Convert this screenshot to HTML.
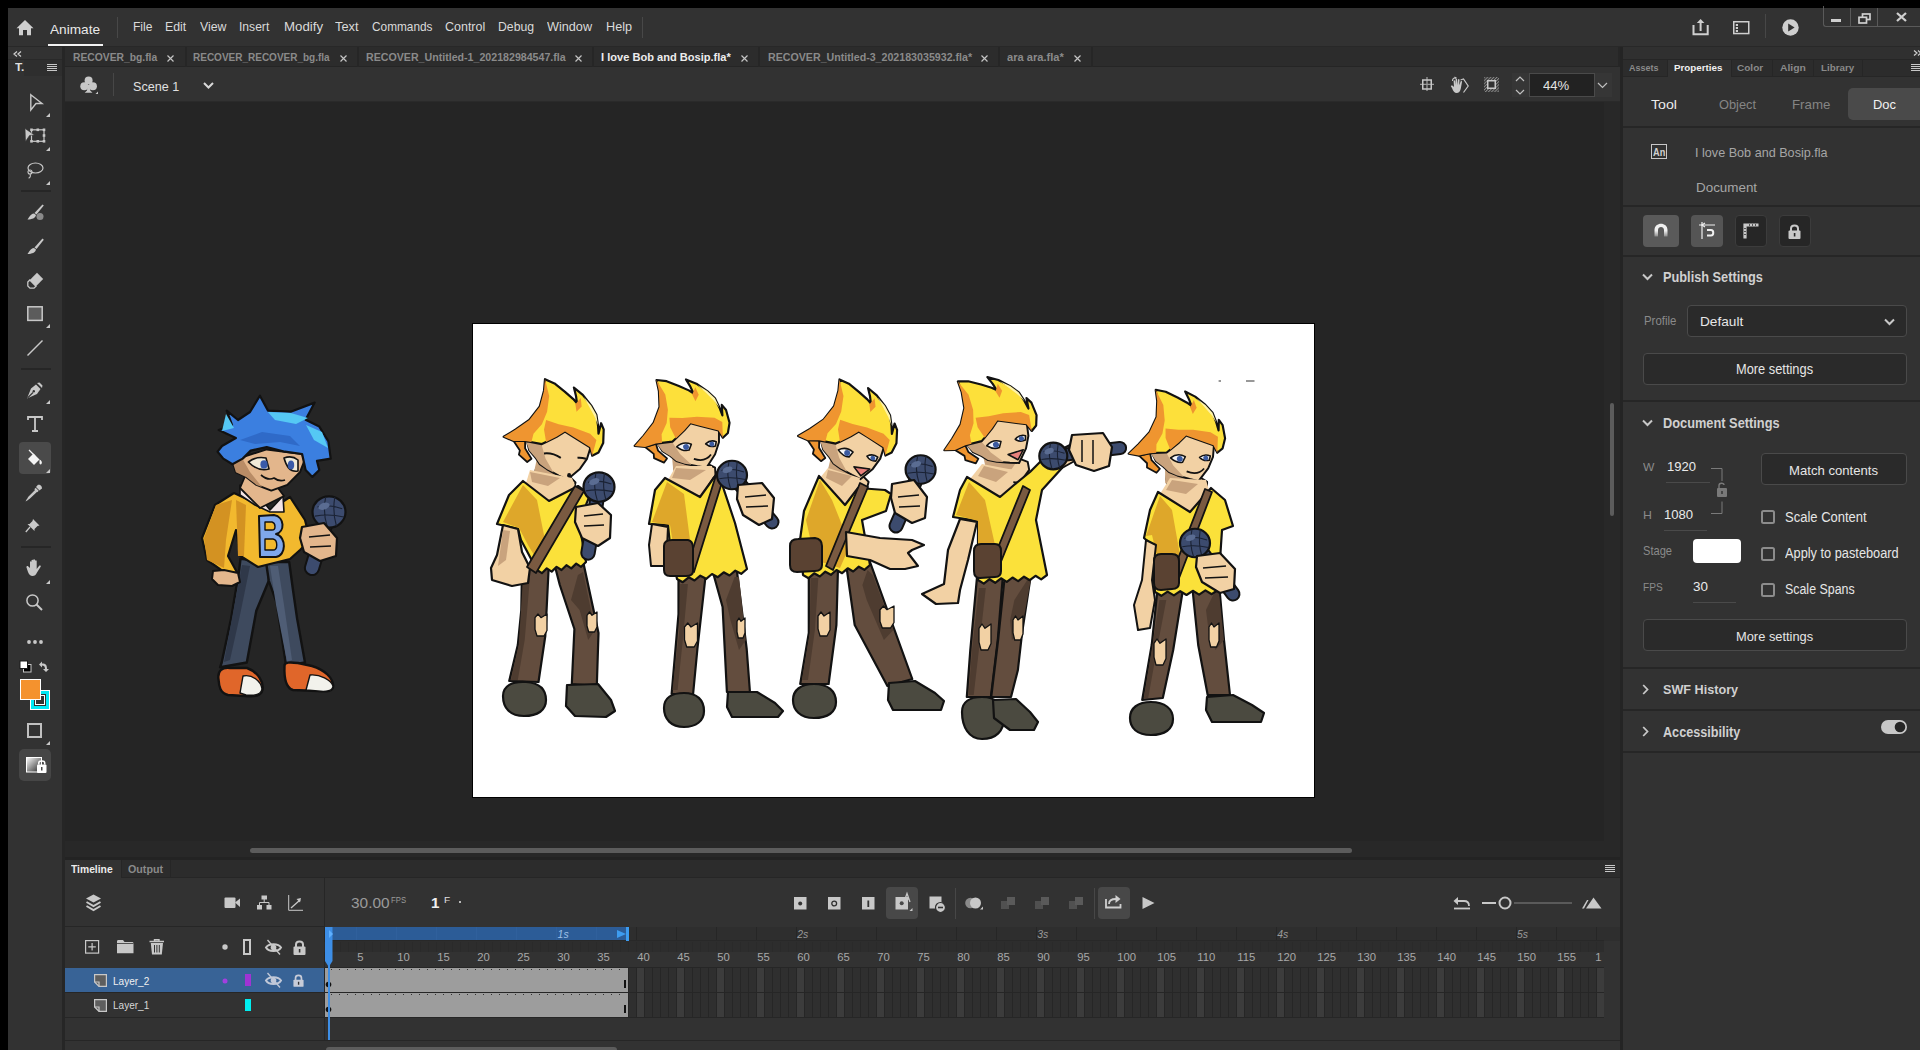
<!DOCTYPE html>
<html><head><meta charset="utf-8">
<style>
*{margin:0;padding:0;box-sizing:border-box}
html,body{width:1920px;height:1050px;overflow:hidden;background:#000;font-family:"Liberation Sans",sans-serif;position:relative}
.a{position:absolute}
.t{position:absolute;white-space:nowrap;line-height:1;transform-origin:0 0}
svg{position:absolute;overflow:visible}
</style></head><body>
<div class="a" style="left:8px;top:8px;width:1912px;height:39px;background:#323232;"></div>
<div class="a" style="left:8px;top:46px;width:1912px;height:1px;background:#282828;"></div>
<div class="a" style="left:8px;top:47px;width:54px;height:1003px;background:#323232;"></div>
<div class="a" style="left:62px;top:47px;width:3px;height:1003px;background:#262626;"></div>
<div class="a" style="left:65px;top:47px;width:1555px;height:20px;background:#2c2c2c;"></div>
<div class="a" style="left:65px;top:66px;width:1555px;height:1px;background:#252525;"></div>
<div class="a" style="left:65px;top:67px;width:1555px;height:35px;background:#323232;"></div>
<div class="a" style="left:65px;top:101px;width:1555px;height:1px;background:#2a2a2a;"></div>
<div class="a" style="left:65px;top:102px;width:1555px;height:755px;background:#282828;"></div>
<div class="a" style="left:65px;top:102px;width:1539px;height:739px;background:#252525;"></div>
<div class="a" style="left:65px;top:857px;width:1555px;height:3px;background:#232323;"></div>
<div class="a" style="left:65px;top:860px;width:1555px;height:190px;background:#323232;"></div>
<div class="a" style="left:1620px;top:47px;width:3px;height:1003px;background:#242424;"></div>
<div class="a" style="left:1623px;top:47px;width:297px;height:1003px;background:#323232;"></div>
<svg style="left:16px;top:19px" width="18" height="17" viewBox="0 0 18 17"><path d="M9 1 L17.5 9.3 L15 9.3 L15 16.3 L11 16.3 L11 11 L7 11 L7 16.3 L3 16.3 L3 9.3 L0.5 9.3 Z" fill="#cfcfcf"/></svg>
<div class="a" style="left:48px;top:44px;width:55px;height:2px;background:#f2f2f2;"></div>
<div class="a" style="left:117px;top:17px;width:1px;height:21px;background:#484848;"></div>
<div class="a" style="left:642px;top:17px;width:1px;height:21px;background:#484848;"></div>
<svg style="left:1692px;top:18px" width="18" height="18" viewBox="0 0 18 18"><path d="M1.5 7 V16.3 H15.7 V7" fill="none" stroke="#cfcfcf" stroke-width="2"/><path d="M8.6 13 V3.5" stroke="#cfcfcf" stroke-width="2"/><path d="M4.8 5 L8.6 1 L12.4 5 Z" fill="#cfcfcf"/></svg>
<svg style="left:1733px;top:21px" width="17" height="14" viewBox="0 0 17 14"><rect x="0.75" y="0.75" width="15" height="11.8" fill="none" stroke="#cfcfcf" stroke-width="1.5"/><rect x="2.8" y="3" width="2.2" height="2" fill="#cfcfcf"/><rect x="2.8" y="6" width="2.2" height="2" fill="#cfcfcf"/><rect x="2.8" y="9" width="2.2" height="2" fill="#cfcfcf"/></svg>
<div class="a" style="left:1765px;top:14px;width:1px;height:24px;background:#474747;"></div>
<svg style="left:1782px;top:19px" width="17" height="17" viewBox="0 0 17 17"><circle cx="8.5" cy="8.5" r="8.2" fill="#cfcfcf"/><path d="M6.2 4.6 L12.6 8.5 L6.2 12.4 Z" fill="#323232"/></svg>
<div class="a" style="left:1823px;top:6px;width:100px;height:21px;border:1px solid #5a5a5a;border-top:none;border-right:none;border-radius:0 0 0 3px"></div>
<div class="a" style="left:1850px;top:8px;width:1px;height:18px;background:#5a5a5a;"></div>
<div class="a" style="left:1877px;top:8px;width:1px;height:18px;background:#5a5a5a;"></div>
<div class="a" style="left:1831px;top:19px;width:10px;height:3px;background:#cfcfcf;"></div>
<svg style="left:1858px;top:13px" width="13" height="11" viewBox="0 0 13 11"><rect x="4.5" y="1" width="7.5" height="5.5" fill="none" stroke="#cfcfcf" stroke-width="1.7"/><rect x="1" y="4.3" width="7.5" height="5.7" fill="#323232" stroke="#cfcfcf" stroke-width="1.7"/></svg>
<svg style="left:1896px;top:12px" width="11" height="10" viewBox="0 0 11 10"><path d="M1 1 L10 9 M10 1 L1 9" stroke="#cfcfcf" stroke-width="2.3"/></svg>
<svg style="left:166.5px;top:54.5px" width="7" height="7" viewBox="0 0 7 7"><path d="M0.5 0.5 L6.5 6.5 M6.5 0.5 L0.5 6.5" stroke="#c4c4c4" stroke-width="1.2"/></svg>
<div class="a" style="left:185px;top:47px;width:2px;height:20px;background:#262626;"></div>
<svg style="left:339.5px;top:54.5px" width="7" height="7" viewBox="0 0 7 7"><path d="M0.5 0.5 L6.5 6.5 M6.5 0.5 L0.5 6.5" stroke="#c4c4c4" stroke-width="1.2"/></svg>
<div class="a" style="left:357px;top:47px;width:2px;height:20px;background:#262626;"></div>
<svg style="left:574.5px;top:54.5px" width="7" height="7" viewBox="0 0 7 7"><path d="M0.5 0.5 L6.5 6.5 M6.5 0.5 L0.5 6.5" stroke="#c4c4c4" stroke-width="1.2"/></svg>
<div class="a" style="left:592px;top:47px;width:2px;height:20px;background:#262626;"></div>
<svg style="left:740.5px;top:54.5px" width="7" height="7" viewBox="0 0 7 7"><path d="M0.5 0.5 L6.5 6.5 M6.5 0.5 L0.5 6.5" stroke="#c4c4c4" stroke-width="1.2"/></svg>
<div class="a" style="left:758px;top:47px;width:2px;height:20px;background:#262626;"></div>
<svg style="left:980.5px;top:54.5px" width="7" height="7" viewBox="0 0 7 7"><path d="M0.5 0.5 L6.5 6.5 M6.5 0.5 L0.5 6.5" stroke="#c4c4c4" stroke-width="1.2"/></svg>
<div class="a" style="left:998px;top:47px;width:2px;height:20px;background:#262626;"></div>
<svg style="left:1073.5px;top:54.5px" width="7" height="7" viewBox="0 0 7 7"><path d="M0.5 0.5 L6.5 6.5 M6.5 0.5 L0.5 6.5" stroke="#c4c4c4" stroke-width="1.2"/></svg>
<div class="a" style="left:1091px;top:47px;width:2px;height:20px;background:#262626;"></div>
<div class="a" style="left:1618px;top:47px;width:2px;height:20px;background:#262626;"></div>
<svg style="left:80px;top:76px" width="19" height="19" viewBox="0 0 19 19"><circle cx="8.6" cy="4.4" r="4" fill="#c8c8c8"/><circle cx="4.3" cy="10.2" r="4" fill="#c8c8c8"/><circle cx="12.9" cy="10.2" r="4" fill="#c8c8c8"/><path d="M7.6 9 L9.6 9 L10.2 14.5 L12.5 16.8 L4.7 16.8 L7 14.5 Z" fill="#c8c8c8"/><path d="M18 15.5 L18 18 L15.5 18 Z" fill="#c8c8c8"/></svg>
<div class="a" style="left:113px;top:73px;width:1px;height:23px;background:#474747;"></div>
<svg style="left:203px;top:82px" width="11" height="7" viewBox="0 0 11 7"><path d="M1 1 L5.5 5.5 L10 1" fill="none" stroke="#d8d8d8" stroke-width="2"/></svg>
<svg style="left:1419px;top:76px" width="16" height="16" viewBox="0 0 16 16"><g fill="none"><path d="M8 1 V15 M1 8.3 H15" stroke="#9a9a9a" stroke-width="1.3"/><rect x="3.75" y="4" width="8.5" height="9" stroke="#c8c8c8" stroke-width="1.5"/></g></svg>
<svg style="left:1450px;top:76px" width="20" height="18" viewBox="0 0 20 18"><path d="M2 12 L1 10.5 C0.6 9.8 1.6 9 2.4 9.6 L4 11 L3.6 5 C3.6 4 5 4 5.1 5 L5.5 9 L5.6 3.3 C5.6 2.3 7.1 2.3 7.1 3.3 L7.3 9 L8 3.8 C8.1 2.8 9.6 2.9 9.5 3.9 L9.2 9.3 L10.6 5.5 C10.9 4.6 12.2 5 12 5.9 L10.8 12.5 C10.3 15.6 8.6 17 6.6 17 C4.6 17 3.2 15.5 2 12 Z" fill="#c8c8c8"/><path d="M10.5 4 L13.5 3 L18.2 10 L13.5 16.5" fill="none" stroke="#c8c8c8" stroke-width="1.2"/><path d="M2.5 5 C2.5 3 3.5 2 5 1.8" fill="none" stroke="#c8c8c8" stroke-width="1.1"/><path d="M4.5 0.5 L7 1.8 L4.8 3.3 Z" fill="#c8c8c8"/></svg>
<svg style="left:1484px;top:77px" width="16" height="16" viewBox="0 0 16 16"><defs><pattern id="hp" width="2.2" height="2.2" patternUnits="userSpaceOnUse" patternTransform="rotate(45)"><rect width="1" height="2.2" fill="#8a8a8a"/></pattern></defs><path d="M0 0 H15 V15 H0 Z M3 3 V12 H12 V3 Z" fill="url(#hp)" fill-rule="evenodd"/><rect x="3.75" y="3.75" width="7.5" height="7.5" fill="none" stroke="#c8c8c8" stroke-width="1.5"/></svg>
<div class="a" style="left:1512px;top:73px;width:17px;height:24px;background:#363636;"></div>
<svg style="left:1515px;top:76px" width="10" height="19" viewBox="0 0 10 19"><path d="M1 5 L5 1 L9 5 M1 14 L5 18 L9 14" fill="none" stroke="#c0c0c0" stroke-width="1.2"/></svg>
<div class="a" style="left:1529px;top:73px;width:66px;height:24px;background:#222;border:1px solid #4a4a4a"></div>
<div class="a" style="left:1595px;top:73px;width:17px;height:24px;background:#363636;"></div>
<svg style="left:1597px;top:82px" width="11" height="7" viewBox="0 0 11 7"><path d="M1 1 L5.5 5.5 L10 1" fill="none" stroke="#c0c0c0" stroke-width="1.2"/></svg>
<div class="a" style="left:250px;top:848px;width:1102px;height:5px;background:#5c5c5c;border-radius:3px"></div>
<div class="a" style="left:1610px;top:403px;width:4px;height:113px;background:#5c5c5c;border-radius:2px"></div>
<div class="a" style="left:472px;top:323px;width:843px;height:475px;background:#fff;border:1px solid #000"></div>
<svg style="left:0;top:0" width="1920" height="1050" viewBox="0 0 1920 1050"><path d="M522.1,565.0 L548.8,565.0 L545.3,636.0 L538.5,682.0 L509.2,681.0 L517.8,645.0 L521.3,610.0 Z" fill="#634d3e" stroke="#121212" stroke-width="2.2" stroke-linejoin="round"/><path d="M523.0,578.0 L529.9,578.0 L524.7,640.0 L517.8,680.0 L510.9,680.0 L518.7,645.0 Z" fill="#4e3c30" stroke="none" stroke-width="0" stroke-linejoin="round"/><path d="M554.6,565.0 L583.0,561.0 L598.5,633.0 L596.8,686.0 L571.8,684.0 L574.4,629.0 L559.8,585.0 Z" fill="#634d3e" stroke="#121212" stroke-width="2.2" stroke-linejoin="round"/><path d="M571.0,600.0 L577.9,575.0 L583.0,572.0 L595.1,630.0 L588.2,640.0 L579.6,610.0 Z" fill="#4e3c30" stroke="none" stroke-width="0" stroke-linejoin="round"/><path d="M535.0,617.7 L538.0,614.0 L541.0,617.7 L547.0,614.0 L547.0,630.5 L544.0,636.0 L537.0,636.0 L535.0,629.4 Z" fill="#f2d1a4" stroke="#121212" stroke-width="1.3" stroke-linejoin="round"/><path d="M587.0,615.3 L589.5,612.0 L592.0,615.3 L597.0,612.0 L597.0,627.0 L594.5,632.0 L588.7,632.0 L587.0,626.0 Z" fill="#f2d1a4" stroke="#121212" stroke-width="1.3" stroke-linejoin="round"/><path d="M503,696 C503,686 512,681 526,682 C540,683 546,690 546,700 C546,710 538,716 524,716 C510,716 503,708 503,696 Z" fill="#4b4a40" stroke="#121212" stroke-width="2.2" stroke-linejoin="round" /><path d="M567,685 L598,684 L611,700 L615,711 L606,717 L575,716 L566,706 Z" fill="#4b4a40" stroke="#121212" stroke-width="2.2" stroke-linejoin="round" /><g transform="translate(545.5,378.4) rotate(0) scale(1.0)"><path d="M-6.0,82.0 L24.0,98.0 L30.0,104.0 L28.0,112.0 L14.0,120.0 L-10.0,106.0 L-10.0,92.0 Z" fill="#f2d1a4" stroke="#121212" stroke-width="2" stroke-linejoin="round"/><path d="M-9.0,82.0 L22.0,98.0 L12.0,104.0 L-12.0,96.0 Z" fill="#c9a37d" stroke="none" stroke-width="0" stroke-linejoin="round"/><path d="M-19.3,60.0 L-16.2,72.0 L-9.9,79.4 L-5.7,85.7 L1.6,90.9 L13.2,97.2 L21.6,101.4 L34.1,90.9 L41.5,80.4 L46.0,66.0 L44.0,56.0 L30.0,50.0 L10.0,50.0 L-5.0,55.0 Z" fill="#f2d1a4" stroke="#121212" stroke-width="2" stroke-linejoin="round"/><path d="M-19.3,63.7 L-16.2,72.0 L-9.9,79.4 L-5.7,85.7 L1.6,90.9 L8.0,94.0 L0.0,80.0 L-4.0,66.0 Z" fill="#c9a37d" stroke="none" stroke-width="0" stroke-linejoin="round"/><path d="M-1.5,75 Q7,74 15.3,79.4 M32,79.4 Q36,79 40.4,80.4" fill="none" stroke="#121212" stroke-width="2" stroke-linejoin="round" /><ellipse cx="23.6" cy="97" rx="2" ry="2.4" fill="#121212" stroke="none" stroke-width="0" transform="rotate(0 23.6 97)"/><path d="M-31.9,62.6 L-25.6,72.0 L-26.6,76.2 L-18.3,83.6 L-14.0,80.4 L-20.4,70.0 L-20.4,62.6 Z" fill="#ef9530" stroke="#121212" stroke-width="1.8" stroke-linejoin="round"/><path d="M-41.8,58.4 L-29.8,51.1 L-16.2,41.6 L-5.7,28.0 L-1.5,12.3 L-0.5,0.8 L9.0,5.0 L19.5,13.4 L27.8,20.7 L31.5,24.9 L30.5,17.6 L28.4,9.2 L37.3,16.5 L45.6,27.0 L50.9,36.4 L52.5,46.9 L53.0,55.3 L55.6,44.8 L58.2,51.1 L57.7,64.7 L53.0,74.1 L46.7,77.3 L44.6,68.9 L27.8,58.4 L19.5,53.2 L11.1,58.4 L0.6,63.7 L-3.6,65.7 L-20.4,62.6 L-31.9,62.6 Z" fill="#fde03a" stroke="#121212" stroke-width="2.2" stroke-linejoin="round"/><path d="M-41.8,58.4 L-29.8,51.1 L-16.2,41.6 L-5.7,28.0 L-1.5,12.3 L-0.5,0.8 L3.7,17.6 L1.6,33.3 L-3.6,45.8 L-12.0,55.3 L-14.1,63.7 L-20.4,62.6 L-31.9,62.6 Z" fill="#ef9530" stroke="none" stroke-width="0" stroke-linejoin="round"/><path d="M0.6,41.6 L13.2,45.8 L27.8,49.0 L44.6,55.3 L50.9,61.6 L46.7,77.3 L44.6,68.9 L27.8,58.4 L19.5,53.2 L11.1,58.4 L0.6,63.7 L-1.5,51.1 Z" fill="#ef9530" stroke="none" stroke-width="0" stroke-linejoin="round"/><path d="M29.9,25.9 L35.2,19.6 L36.2,28.0 L31.0,33.3 Z" fill="#ef9530" stroke="none" stroke-width="0" stroke-linejoin="round"/><path d="M38.3,18.6 L45.6,27.0 L50.9,36.4 L52.5,46.9 L49.3,38.5 L43.6,28.0 Z" fill="#fff3a8" stroke="none" stroke-width="0" stroke-linejoin="round"/></g><path d="M530.0,470.0 L572.0,478.0 L576.0,488.0 L549.0,503.0 L526.0,483.0 Z" fill="#f2d1a4" stroke="none" stroke-width="0" stroke-linejoin="round"/><path d="M530.0,472.0 L560.0,478.0 L548.0,486.0 L532.0,482.0 Z" fill="#c9a37d" stroke="none" stroke-width="0" stroke-linejoin="round"/><path d="M523.0,481.0 L549.0,501.0 L578.0,486.0 L590.0,495.0 L579.0,522.0 L586.0,562.0 L586.0,562.0 L581.1,566.8 L576.2,563.6 L571.3,568.4 L566.4,565.2 L561.5,570.0 L556.6,566.8 L551.7,571.6 L546.8,568.4 L541.9,573.2 L537.0,570.0 L521.0,540.0 L518.0,529.0 L497.0,524.0 L509.0,495.0 Z" fill="#fbe13a" stroke="#121212" stroke-width="2.2" stroke-linejoin="round"/><path d="M523.0,485.0 L537.0,500.0 L545.0,540.0 L540.0,565.0 L528.0,545.0 L519.0,528.0 L503.0,522.0 Z" fill="#dea72a" stroke="none" stroke-width="0" stroke-linejoin="round"/><path d="M503.0,525.0 L518.0,529.0 L522.0,552.0 L530.0,568.0 L528.0,583.0 L512.0,586.0 L492.0,580.0 L491.0,568.0 L497.0,555.0 Z" fill="#f2d1a4" stroke="#121212" stroke-width="2.2" stroke-linejoin="round"/><path d="M503.0,530.0 L510.0,531.0 L506.0,560.0 L498.0,566.0 Z" fill="#c9a37d" stroke="none" stroke-width="0" stroke-linejoin="round"/><path d="M575.0,486.0 L584.0,491.0 L536.0,573.0 L527.0,567.0 Z" fill="#7a5a41" stroke="#121212" stroke-width="1.8" stroke-linejoin="round"/><path d="M599,487 L588,553" stroke="#121212" stroke-width="15.4" stroke-linecap="round"/><path d="M599,487 L588,553" stroke="#3c4b6e" stroke-width="11.4" stroke-linecap="round"/><ellipse cx="599" cy="487" rx="15.5" ry="14.725" fill="#3c4b6e" stroke="#121212" stroke-width="2.2" transform="rotate(0 599 487)"/><path d="M588.15,482.35 Q599,479.25 611.4,483.9 M585.825,490.875 Q599,488.55 612.95,491.65 M595.9,473.05 Q592.8,487 597.45,500.95 M604.425,473.05 Q602.1,487 605.975,500.175" fill="none" stroke="#1a2234" stroke-width="1.1"/><ellipse cx="594.35" cy="481.575" rx="5.425" ry="3.1" fill="#5a6c92" stroke="none" stroke-width="0" transform="rotate(-20 594.35 481.575)"/><path d="M576.0,507.0 L598.0,503.0 L611.0,515.0 L610.0,538.0 L598.0,546.0 L582.0,538.0 L575.0,522.0 Z" fill="#f2d1a4" stroke="#121212" stroke-width="2.2" stroke-linejoin="round"/><path d="M584,516 L603,514 M584,526 L604,525" fill="none" stroke="#121212" stroke-width="1.5" stroke-linejoin="round" /><path d="M678.5,570.0 L706.0,572.0 L697.4,649.0 L693.1,694.0 L671.6,694.0 L678.5,614.0 Z" fill="#634d3e" stroke="#121212" stroke-width="2.2" stroke-linejoin="round"/><path d="M680.2,584.0 L687.9,584.0 L682.8,640.0 L677.6,690.0 L672.5,690.0 L679.3,630.0 Z" fill="#4e3c30" stroke="none" stroke-width="0" stroke-linejoin="round"/><path d="M712.3,570.0 L736.4,567.0 L746.7,649.0 L750.1,694.0 L726.9,692.0 L722.6,607.0 Z" fill="#634d3e" stroke="#121212" stroke-width="2.2" stroke-linejoin="round"/><path d="M726.0,600.0 L734.6,577.0 L739.0,577.0 L745.8,640.0 L739.0,650.0 L730.4,620.0 Z" fill="#4e3c30" stroke="none" stroke-width="0" stroke-linejoin="round"/><path d="M684.5,627.0 L687.8,623.0 L691.0,627.0 L697.5,623.0 L697.5,641.0 L694.2,647.0 L686.7,647.0 L684.5,639.8 Z" fill="#f2d1a4" stroke="#121212" stroke-width="1.3" stroke-linejoin="round"/><path d="M737.0,621.3 L739.0,618.0 L741.0,621.3 L745.0,618.0 L745.0,633.0 L743.0,638.0 L738.3,638.0 L737.0,632.0 Z" fill="#f2d1a4" stroke="#121212" stroke-width="1.3" stroke-linejoin="round"/><path d="M664,708 C664,698 672,693 684,693 C697,693 704,700 704,711 C704,721 696,727 684,727 C671,727 664,719 664,708 Z" fill="#4b4a40" stroke="#121212" stroke-width="2.2" stroke-linejoin="round" /><path d="M728,692 L757,692 L775,703 L783,711 L778,717 L732,717 L727,707 Z" fill="#4b4a40" stroke="#121212" stroke-width="2.2" stroke-linejoin="round" /><g transform="translate(656.7,379.1) rotate(-17.3) scale(0.98)"><path d="M-6.0,82.0 L24.0,98.0 L30.0,104.0 L28.0,112.0 L14.0,120.0 L-10.0,106.0 L-10.0,92.0 Z" fill="#f2d1a4" stroke="#121212" stroke-width="2" stroke-linejoin="round"/><path d="M-9.0,82.0 L22.0,98.0 L12.0,104.0 L-12.0,96.0 Z" fill="#c9a37d" stroke="none" stroke-width="0" stroke-linejoin="round"/><path d="M-19.3,60.0 L-16.2,72.0 L-9.9,79.4 L-5.7,85.7 L1.6,90.9 L13.2,97.2 L21.6,101.4 L34.1,90.9 L41.5,80.4 L46.0,66.0 L44.0,56.0 L30.0,50.0 L10.0,50.0 L-5.0,55.0 Z" fill="#f2d1a4" stroke="#121212" stroke-width="2" stroke-linejoin="round"/><path d="M-19.3,63.7 L-16.2,72.0 L-9.9,79.4 L-5.7,85.7 L1.6,90.9 L8.0,94.0 L0.0,80.0 L-4.0,66.0 Z" fill="#c9a37d" stroke="none" stroke-width="0" stroke-linejoin="round"/><path d="M-1,72 Q7,68 14,74 L10,79 Q4,79 -1,72 Z" fill="#f6f6f6" stroke="#121212" stroke-width="1.6" stroke-linejoin="round" /><ellipse cx="8" cy="75" rx="3" ry="3" fill="#3b5aa0" stroke="none" stroke-width="0" transform="rotate(0 8 75)"/><path d="M28,78 Q34,75 39,79 L37,83 Q31,83 28,78 Z" fill="#f6f6f6" stroke="#121212" stroke-width="1.6" stroke-linejoin="round" /><ellipse cx="34" cy="80" rx="2.5" ry="2.5" fill="#3b5aa0" stroke="none" stroke-width="0" transform="rotate(0 34 80)"/><path d="M12,89 Q22,96 30,90" fill="none" stroke="#121212" stroke-width="1.8" stroke-linejoin="round" /><path d="M-31.9,62.6 L-25.6,72.0 L-26.6,76.2 L-18.3,83.6 L-14.0,80.4 L-20.4,70.0 L-20.4,62.6 Z" fill="#ef9530" stroke="#121212" stroke-width="1.8" stroke-linejoin="round"/><path d="M-41.8,58.4 L-29.8,51.1 L-16.2,41.6 L-5.7,28.0 L-1.5,12.3 L-0.5,0.8 L9.0,5.0 L19.5,13.4 L27.8,20.7 L31.5,24.9 L30.5,17.6 L28.4,9.2 L37.3,16.5 L45.6,27.0 L50.9,36.4 L52.5,46.9 L53.0,55.3 L55.6,44.8 L58.2,51.1 L57.7,64.7 L53.0,74.1 L46.7,77.3 L44.6,68.9 L27.8,58.4 L19.5,53.2 L11.1,58.4 L0.6,63.7 L-3.6,65.7 L-20.4,62.6 L-31.9,62.6 Z" fill="#fde03a" stroke="#121212" stroke-width="2.2" stroke-linejoin="round"/><path d="M-41.8,58.4 L-29.8,51.1 L-16.2,41.6 L-5.7,28.0 L-1.5,12.3 L-0.5,0.8 L3.7,17.6 L1.6,33.3 L-3.6,45.8 L-12.0,55.3 L-14.1,63.7 L-20.4,62.6 L-31.9,62.6 Z" fill="#ef9530" stroke="none" stroke-width="0" stroke-linejoin="round"/><path d="M0.6,41.6 L13.2,45.8 L27.8,49.0 L44.6,55.3 L50.9,61.6 L46.7,77.3 L44.6,68.9 L27.8,58.4 L19.5,53.2 L11.1,58.4 L0.6,63.7 L-1.5,51.1 Z" fill="#ef9530" stroke="none" stroke-width="0" stroke-linejoin="round"/><path d="M29.9,25.9 L35.2,19.6 L36.2,28.0 L31.0,33.3 Z" fill="#ef9530" stroke="none" stroke-width="0" stroke-linejoin="round"/><path d="M38.3,18.6 L45.6,27.0 L50.9,36.4 L52.5,46.9 L49.3,38.5 L43.6,28.0 Z" fill="#fff3a8" stroke="none" stroke-width="0" stroke-linejoin="round"/></g><path d="M676.0,466.0 L712.0,466.0 L712.0,478.0 L700.0,498.0 L668.0,480.0 Z" fill="#f2d1a4" stroke="none" stroke-width="0" stroke-linejoin="round"/><path d="M676.0,468.0 L706.0,470.0 L690.0,480.0 L672.0,478.0 Z" fill="#c9a37d" stroke="none" stroke-width="0" stroke-linejoin="round"/><path d="M665.0,478.0 L700.0,497.0 L718.0,472.0 L735.0,523.0 L747.0,569.0 L747.0,569.0 L741.2,573.8 L735.3,570.7 L729.5,575.5 L723.7,572.3 L717.8,577.2 L712.0,574.0 L706.2,578.8 L700.3,575.7 L694.5,580.5 L688.7,577.3 L682.8,582.2 L677.0,579.0 L670.0,545.0 L668.0,525.0 L649.0,524.0 L655.0,490.0 Z" fill="#fbe13a" stroke="#121212" stroke-width="2.2" stroke-linejoin="round"/><path d="M667.0,482.0 L684.0,494.0 L690.0,540.0 L684.0,575.0 L674.0,550.0 L670.0,525.0 L652.0,522.0 Z" fill="#dea72a" stroke="none" stroke-width="0" stroke-linejoin="round"/><path d="M652.0,524.0 L668.0,527.0 L667.0,548.0 L666.0,566.0 L651.0,566.0 L649.0,545.0 Z" fill="#f2d1a4" stroke="#121212" stroke-width="2" stroke-linejoin="round"/><path d="M717.0,472.0 L724.0,476.0 L694.0,572.0 L687.0,568.0 Z" fill="#7a5a41" stroke="#121212" stroke-width="1.8" stroke-linejoin="round"/><path d="M664,546 Q664,540 672,540 L688,540 Q693,541 693,548 L693,571 Q693,576 686,576 L670,576 Q664,576 664,570 Z" fill="#5a4232" stroke="#121212" stroke-width="2" stroke-linejoin="round" /><path d="M732,475 L772,522" stroke="#121212" stroke-width="15.0" stroke-linecap="round"/><path d="M732,475 L772,522" stroke="#3c4b6e" stroke-width="11.0" stroke-linecap="round"/><ellipse cx="732" cy="475" rx="15" ry="14.25" fill="#3c4b6e" stroke="#121212" stroke-width="2.2" transform="rotate(0 732 475)"/><path d="M721.5,470.5 Q732,467.5 744.0,472.0 M719.25,478.75 Q732,476.5 745.5,479.5 M729.0,461.5 Q726.0,475 730.5,488.5 M737.25,461.5 Q735.0,475 738.75,487.75" fill="none" stroke="#1a2234" stroke-width="1.1"/><ellipse cx="727.5" cy="469.75" rx="5.25" ry="3.0" fill="#5a6c92" stroke="none" stroke-width="0" transform="rotate(-20 727.5 469.75)"/><path d="M738.0,485.0 L762.0,483.0 L774.0,498.0 L772.0,519.0 L759.0,525.0 L743.0,515.0 L737.0,499.0 Z" fill="#f2d1a4" stroke="#121212" stroke-width="2.2" stroke-linejoin="round"/><path d="M745,497 L766,495 M746,507 L768,506" fill="none" stroke="#121212" stroke-width="1.5" stroke-linejoin="round" /><path d="M808.8,564.0 L838.1,564.0 L836.4,625.0 L828.6,684.0 L800.2,684.0 L808.8,633.0 Z" fill="#634d3e" stroke="#121212" stroke-width="2.2" stroke-linejoin="round"/><path d="M810.6,578.0 L818.3,578.0 L814.9,630.0 L808.0,680.0 L802.0,680.0 L809.7,633.0 Z" fill="#4e3c30" stroke="none" stroke-width="0" stroke-linejoin="round"/><path d="M846.1,564.0 L869.3,560.0 L894.2,629.0 L912.3,679.0 L887.4,686.0 L854.7,625.0 Z" fill="#634d3e" stroke="#121212" stroke-width="2.2" stroke-linejoin="round"/><path d="M862.4,585.0 L867.6,570.0 L872.7,575.0 L893.4,630.0 L883.9,640.0 L866.7,600.0 Z" fill="#4e3c30" stroke="none" stroke-width="0" stroke-linejoin="round"/><path d="M818.0,616.0 L821.0,612.0 L824.0,616.0 L830.0,612.0 L830.0,630.0 L827.0,636.0 L820.0,636.0 L818.0,628.8 Z" fill="#f2d1a4" stroke="#121212" stroke-width="1.3" stroke-linejoin="round"/><path d="M880.0,609.7 L883.5,606.0 L887.0,609.7 L894.0,606.0 L894.0,622.5 L890.5,628.0 L882.3,628.0 L880.0,621.4 Z" fill="#f2d1a4" stroke="#121212" stroke-width="1.3" stroke-linejoin="round"/><path d="M793,700 C793,690 801,684 814,684 C828,684 836,691 836,702 C836,712 828,718 814,718 C800,718 793,710 793,700 Z" fill="#4b4a40" stroke="#121212" stroke-width="2.2" stroke-linejoin="round" /><path d="M889,683 L915,681 L935,693 L944,701 L941,710 L893,710 L888,700 Z" fill="#4b4a40" stroke="#121212" stroke-width="2.2" stroke-linejoin="round" /><g transform="translate(840,378.6) rotate(0.6) scale(0.99)"><path d="M-6.0,82.0 L24.0,98.0 L30.0,104.0 L28.0,112.0 L14.0,120.0 L-10.0,106.0 L-10.0,92.0 Z" fill="#f2d1a4" stroke="#121212" stroke-width="2" stroke-linejoin="round"/><path d="M-9.0,82.0 L22.0,98.0 L12.0,104.0 L-12.0,96.0 Z" fill="#c9a37d" stroke="none" stroke-width="0" stroke-linejoin="round"/><path d="M-19.3,60.0 L-16.2,72.0 L-9.9,79.4 L-5.7,85.7 L1.6,90.9 L13.2,97.2 L21.6,101.4 L34.1,90.9 L41.5,80.4 L46.0,66.0 L44.0,56.0 L30.0,50.0 L10.0,50.0 L-5.0,55.0 Z" fill="#f2d1a4" stroke="#121212" stroke-width="2" stroke-linejoin="round"/><path d="M-19.3,63.7 L-16.2,72.0 L-9.9,79.4 L-5.7,85.7 L1.6,90.9 L8.0,94.0 L0.0,80.0 L-4.0,66.0 Z" fill="#c9a37d" stroke="none" stroke-width="0" stroke-linejoin="round"/><path d="M-1,72 Q7,68 14,74 L10,79 Q4,79 -1,72 Z" fill="#f6f6f6" stroke="#121212" stroke-width="1.6" stroke-linejoin="round" /><ellipse cx="8" cy="75" rx="3" ry="3" fill="#3b5aa0" stroke="none" stroke-width="0" transform="rotate(0 8 75)"/><path d="M28,78 Q34,75 39,79 L37,83 Q31,83 28,78 Z" fill="#f6f6f6" stroke="#121212" stroke-width="1.6" stroke-linejoin="round" /><ellipse cx="34" cy="80" rx="2.5" ry="2.5" fill="#3b5aa0" stroke="none" stroke-width="0" transform="rotate(0 34 80)"/><path d="M15,89 L31,91 L22,98 Z" fill="#e8817c" stroke="#121212" stroke-width="1.6" stroke-linejoin="round" /><path d="M-31.9,62.6 L-25.6,72.0 L-26.6,76.2 L-18.3,83.6 L-14.0,80.4 L-20.4,70.0 L-20.4,62.6 Z" fill="#ef9530" stroke="#121212" stroke-width="1.8" stroke-linejoin="round"/><path d="M-41.8,58.4 L-29.8,51.1 L-16.2,41.6 L-5.7,28.0 L-1.5,12.3 L-0.5,0.8 L9.0,5.0 L19.5,13.4 L27.8,20.7 L31.5,24.9 L30.5,17.6 L28.4,9.2 L37.3,16.5 L45.6,27.0 L50.9,36.4 L52.5,46.9 L53.0,55.3 L55.6,44.8 L58.2,51.1 L57.7,64.7 L53.0,74.1 L46.7,77.3 L44.6,68.9 L27.8,58.4 L19.5,53.2 L11.1,58.4 L0.6,63.7 L-3.6,65.7 L-20.4,62.6 L-31.9,62.6 Z" fill="#fde03a" stroke="#121212" stroke-width="2.2" stroke-linejoin="round"/><path d="M-41.8,58.4 L-29.8,51.1 L-16.2,41.6 L-5.7,28.0 L-1.5,12.3 L-0.5,0.8 L3.7,17.6 L1.6,33.3 L-3.6,45.8 L-12.0,55.3 L-14.1,63.7 L-20.4,62.6 L-31.9,62.6 Z" fill="#ef9530" stroke="none" stroke-width="0" stroke-linejoin="round"/><path d="M0.6,41.6 L13.2,45.8 L27.8,49.0 L44.6,55.3 L50.9,61.6 L46.7,77.3 L44.6,68.9 L27.8,58.4 L19.5,53.2 L11.1,58.4 L0.6,63.7 L-1.5,51.1 Z" fill="#ef9530" stroke="none" stroke-width="0" stroke-linejoin="round"/><path d="M29.9,25.9 L35.2,19.6 L36.2,28.0 L31.0,33.3 Z" fill="#ef9530" stroke="none" stroke-width="0" stroke-linejoin="round"/><path d="M38.3,18.6 L45.6,27.0 L50.9,36.4 L52.5,46.9 L49.3,38.5 L43.6,28.0 Z" fill="#fff3a8" stroke="none" stroke-width="0" stroke-linejoin="round"/></g><path d="M828.0,468.0 L860.0,478.0 L857.0,490.0 L845.0,505.0 L820.0,478.0 Z" fill="#f2d1a4" stroke="none" stroke-width="0" stroke-linejoin="round"/><path d="M828.0,470.0 L852.0,476.0 L842.0,486.0 L826.0,478.0 Z" fill="#c9a37d" stroke="none" stroke-width="0" stroke-linejoin="round"/><path d="M819.0,476.0 L845.0,505.0 L858.0,488.0 L885.0,490.0 L891.0,494.0 L886.0,511.0 L862.0,520.0 L870.0,565.0 L870.0,565.0 L864.4,569.8 L858.8,566.7 L853.2,571.5 L847.7,568.3 L842.1,573.2 L836.5,570.0 L830.9,574.8 L825.3,571.7 L819.8,576.5 L814.2,573.3 L808.6,578.2 L803.0,575.0 L800.0,540.0 L804.0,511.0 Z" fill="#fbe13a" stroke="#121212" stroke-width="2.2" stroke-linejoin="round"/><path d="M820.0,480.0 L832.0,500.0 L850.0,545.0 L840.0,568.0 L815.0,560.0 L806.0,520.0 Z" fill="#dea72a" stroke="none" stroke-width="0" stroke-linejoin="round"/><path d="M860.0,483.0 L868.0,487.0 L833.0,570.0 L826.0,566.0 Z" fill="#7a5a41" stroke="#121212" stroke-width="1.8" stroke-linejoin="round"/><path d="M790,546 Q790,539 798,539 L815,538 Q822,539 822,546 L822,565 Q822,571 815,571 L797,572 Q790,572 790,565 Z" fill="#5a4232" stroke="#121212" stroke-width="2" stroke-linejoin="round" /><path d="M846.0,532.0 L880.0,538.0 L912.0,540.0 L924.0,545.0 L912.0,550.0 L908.0,553.0 L918.0,566.0 L905.0,569.0 L890.0,569.0 L870.0,560.0 L847.0,556.0 Z" fill="#f2d1a4" stroke="#121212" stroke-width="2.2" stroke-linejoin="round"/><path d="M920.6,469.5 L896,526" stroke="#121212" stroke-width="15.0" stroke-linecap="round"/><path d="M920.6,469.5 L896,526" stroke="#3c4b6e" stroke-width="11.0" stroke-linecap="round"/><ellipse cx="920.6" cy="469.5" rx="15" ry="14.25" fill="#3c4b6e" stroke="#121212" stroke-width="2.2" transform="rotate(0 920.6 469.5)"/><path d="M910.1,465.0 Q920.6,462.0 932.6,466.5 M907.85,473.25 Q920.6,471.0 934.1,474.0 M917.6,456.0 Q914.6,469.5 919.1,483.0 M925.85,456.0 Q923.6,469.5 927.35,482.25" fill="none" stroke="#1a2234" stroke-width="1.1"/><ellipse cx="916.1" cy="464.25" rx="5.25" ry="3.0" fill="#5a6c92" stroke="none" stroke-width="0" transform="rotate(-20 916.1 464.25)"/><path d="M892.0,484.0 L914.0,480.0 L927.0,497.0 L925.0,518.0 L912.0,523.0 L895.0,513.0 L891.0,498.0 Z" fill="#f2d1a4" stroke="#121212" stroke-width="2.2" stroke-linejoin="round"/><path d="M898,497 L919,495 M899,507 L920,506" fill="none" stroke="#121212" stroke-width="1.5" stroke-linejoin="round" /><path d="M977.2,575.0 L1003.0,574.0 L997.8,640.0 L990.9,697.0 L966.8,697.0 L970.3,650.0 Z" fill="#634d3e" stroke="#121212" stroke-width="2.2" stroke-linejoin="round"/><path d="M978.9,588.0 L985.8,588.0 L978.9,650.0 L973.7,695.0 L968.6,695.0 L972.0,650.0 Z" fill="#4e3c30" stroke="none" stroke-width="0" stroke-linejoin="round"/><path d="M1005.0,574.0 L1031.6,570.0 L1022.2,632.0 L1017.9,670.0 L1011.0,697.0 L991.2,697.0 L998.1,640.0 Z" fill="#634d3e" stroke="#121212" stroke-width="2.2" stroke-linejoin="round"/><path d="M1014.4,600.0 L1027.3,580.0 L1030.8,580.0 L1021.3,632.0 L1011.9,640.0 L1010.1,620.0 Z" fill="#4e3c30" stroke="none" stroke-width="0" stroke-linejoin="round"/><path d="M979.0,628.3 L982.0,624.0 L985.0,628.3 L991.0,624.0 L991.0,643.5 L988.0,650.0 L981.0,650.0 L979.0,642.2 Z" fill="#f2d1a4" stroke="#121212" stroke-width="1.3" stroke-linejoin="round"/><path d="M1013.0,620.0 L1015.5,616.0 L1018.0,620.0 L1023.0,616.0 L1023.0,634.0 L1020.5,640.0 L1014.7,640.0 L1013.0,632.8 Z" fill="#f2d1a4" stroke="#121212" stroke-width="1.3" stroke-linejoin="round"/><path d="M962,712 C962,702 970,697 982,697 C996,697 1004,705 1004,718 C1004,731 996,739 982,739 C969,739 962,727 962,712 Z" fill="#4b4a40" stroke="#121212" stroke-width="2.2" stroke-linejoin="round" /><path d="M993,700 L1016,699 L1030,712 L1038,722 L1034,730 L1010,730 L994,718 Z" fill="#4b4a40" stroke="#121212" stroke-width="2.2" stroke-linejoin="round" /><g transform="translate(958,380.5) rotate(-24.5) scale(0.99)"><path d="M-6.0,82.0 L24.0,98.0 L30.0,104.0 L28.0,112.0 L14.0,120.0 L-10.0,106.0 L-10.0,92.0 Z" fill="#f2d1a4" stroke="#121212" stroke-width="2" stroke-linejoin="round"/><path d="M-9.0,82.0 L22.0,98.0 L12.0,104.0 L-12.0,96.0 Z" fill="#c9a37d" stroke="none" stroke-width="0" stroke-linejoin="round"/><path d="M-19.3,60.0 L-16.2,72.0 L-9.9,79.4 L-5.7,85.7 L1.6,90.9 L13.2,97.2 L21.6,101.4 L34.1,90.9 L41.5,80.4 L46.0,66.0 L44.0,56.0 L30.0,50.0 L10.0,50.0 L-5.0,55.0 Z" fill="#f2d1a4" stroke="#121212" stroke-width="2" stroke-linejoin="round"/><path d="M-19.3,63.7 L-16.2,72.0 L-9.9,79.4 L-5.7,85.7 L1.6,90.9 L8.0,94.0 L0.0,80.0 L-4.0,66.0 Z" fill="#c9a37d" stroke="none" stroke-width="0" stroke-linejoin="round"/><path d="M-1,72 Q7,68 14,74 L10,79 Q4,79 -1,72 Z" fill="#f6f6f6" stroke="#121212" stroke-width="1.6" stroke-linejoin="round" /><ellipse cx="8" cy="75" rx="3" ry="3" fill="#3b5aa0" stroke="none" stroke-width="0" transform="rotate(0 8 75)"/><path d="M28,78 Q34,75 39,79 L37,83 Q31,83 28,78 Z" fill="#f6f6f6" stroke="#121212" stroke-width="1.6" stroke-linejoin="round" /><ellipse cx="34" cy="80" rx="2.5" ry="2.5" fill="#3b5aa0" stroke="none" stroke-width="0" transform="rotate(0 34 80)"/><path d="M15,89 L31,91 L22,98 Z" fill="#e8817c" stroke="#121212" stroke-width="1.6" stroke-linejoin="round" /><path d="M-31.9,62.6 L-25.6,72.0 L-26.6,76.2 L-18.3,83.6 L-14.0,80.4 L-20.4,70.0 L-20.4,62.6 Z" fill="#ef9530" stroke="#121212" stroke-width="1.8" stroke-linejoin="round"/><path d="M-41.8,58.4 L-29.8,51.1 L-16.2,41.6 L-5.7,28.0 L-1.5,12.3 L-0.5,0.8 L9.0,5.0 L19.5,13.4 L27.8,20.7 L31.5,24.9 L30.5,17.6 L28.4,9.2 L37.3,16.5 L45.6,27.0 L50.9,36.4 L52.5,46.9 L53.0,55.3 L55.6,44.8 L58.2,51.1 L57.7,64.7 L53.0,74.1 L46.7,77.3 L44.6,68.9 L27.8,58.4 L19.5,53.2 L11.1,58.4 L0.6,63.7 L-3.6,65.7 L-20.4,62.6 L-31.9,62.6 Z" fill="#fde03a" stroke="#121212" stroke-width="2.2" stroke-linejoin="round"/><path d="M-41.8,58.4 L-29.8,51.1 L-16.2,41.6 L-5.7,28.0 L-1.5,12.3 L-0.5,0.8 L3.7,17.6 L1.6,33.3 L-3.6,45.8 L-12.0,55.3 L-14.1,63.7 L-20.4,62.6 L-31.9,62.6 Z" fill="#ef9530" stroke="none" stroke-width="0" stroke-linejoin="round"/><path d="M0.6,41.6 L13.2,45.8 L27.8,49.0 L44.6,55.3 L50.9,61.6 L46.7,77.3 L44.6,68.9 L27.8,58.4 L19.5,53.2 L11.1,58.4 L0.6,63.7 L-1.5,51.1 Z" fill="#ef9530" stroke="none" stroke-width="0" stroke-linejoin="round"/><path d="M29.9,25.9 L35.2,19.6 L36.2,28.0 L31.0,33.3 Z" fill="#ef9530" stroke="none" stroke-width="0" stroke-linejoin="round"/><path d="M38.3,18.6 L45.6,27.0 L50.9,36.4 L52.5,46.9 L49.3,38.5 L43.6,28.0 Z" fill="#fff3a8" stroke="none" stroke-width="0" stroke-linejoin="round"/></g><path d="M982.0,464.0 L1014.0,470.0 L1013.0,487.0 L1000.0,498.0 L970.0,479.0 Z" fill="#f2d1a4" stroke="none" stroke-width="0" stroke-linejoin="round"/><path d="M984.0,466.0 L1008.0,472.0 L996.0,482.0 L978.0,476.0 Z" fill="#c9a37d" stroke="none" stroke-width="0" stroke-linejoin="round"/><path d="M967.0,477.0 L1000.0,497.0 L1014.0,485.0 L1030.0,472.0 L1047.0,455.0 L1062.0,468.0 L1042.0,490.0 L1036.0,520.0 L1047.0,575.0 L1047.0,575.0 L1041.2,579.4 L1035.5,575.8 L1029.8,580.2 L1024.0,576.7 L1018.2,581.1 L1012.5,577.5 L1006.8,581.9 L1001.0,578.3 L995.2,582.8 L989.5,579.2 L983.8,583.6 L978.0,580.0 L978.0,521.0 L953.0,517.0 L960.0,490.0 Z" fill="#fbe13a" stroke="#121212" stroke-width="2.2" stroke-linejoin="round"/><path d="M969.0,482.0 L985.0,500.0 L995.0,545.0 L985.0,575.0 L978.0,545.0 L978.0,521.0 L956.0,515.0 Z" fill="#dea72a" stroke="none" stroke-width="0" stroke-linejoin="round"/><path d="M960.0,519.0 L977.0,522.0 L968.0,560.0 L960.0,590.0 L958.0,603.0 L936.0,604.0 L922.0,594.0 L944.0,584.0 L948.0,550.0 Z" fill="#f2d1a4" stroke="#121212" stroke-width="2.2" stroke-linejoin="round"/><path d="M1023.0,486.0 L1030.0,490.0 L996.0,574.0 L989.0,570.0 Z" fill="#7a5a41" stroke="#121212" stroke-width="1.8" stroke-linejoin="round"/><path d="M974,551 Q974,544 981,544 L995,544 Q1001,544 1001,551 L1001,571 Q1001,577 995,577 L980,578 Q974,578 974,571 Z" fill="#5a4232" stroke="#121212" stroke-width="2" stroke-linejoin="round" /><path d="M1056.0,452.0 L1076.0,442.0 L1080.0,458.0 L1062.0,468.0 Z" fill="#f2d1a4" stroke="#121212" stroke-width="2" stroke-linejoin="round"/><path d="M1053.3,456 L1120,448" stroke="#121212" stroke-width="14.200000000000001" stroke-linecap="round"/><path d="M1053.3,456 L1120,448" stroke="#3c4b6e" stroke-width="10.200000000000001" stroke-linecap="round"/><ellipse cx="1053.3" cy="456" rx="14" ry="13.299999999999999" fill="#3c4b6e" stroke="#121212" stroke-width="2.2" transform="rotate(0 1053.3 456)"/><path d="M1043.5,451.8 Q1053.3,449.0 1064.5,453.2 M1041.3999999999999,459.5 Q1053.3,457.4 1065.8999999999999,460.2 M1050.5,443.4 Q1047.7,456 1051.8999999999999,468.6 M1058.2,443.4 Q1056.1,456 1059.6,467.9" fill="none" stroke="#1a2234" stroke-width="1.1"/><ellipse cx="1049.1" cy="451.1" rx="4.8999999999999995" ry="2.8000000000000003" fill="#5a6c92" stroke="none" stroke-width="0" transform="rotate(-20 1049.1 451.1)"/><path d="M1072.0,435.0 L1103.0,433.0 L1112.0,447.0 L1109.0,466.0 L1094.0,471.0 L1076.0,465.0 L1069.0,450.0 Z" fill="#f2d1a4" stroke="#121212" stroke-width="2.2" stroke-linejoin="round"/><path d="M1082,440 L1082,462 M1093,440 L1093,464" fill="none" stroke="#121212" stroke-width="1.5" stroke-linejoin="round" /><path d="M1218.6,381 H1221 M1246,381 H1254.5" stroke="#333" stroke-width="1.2"/><path d="M1157.7,587.0 L1183.5,586.0 L1173.2,650.0 L1162.8,698.0 L1142.2,700.0 L1151.7,645.0 Z" fill="#634d3e" stroke="#121212" stroke-width="2.2" stroke-linejoin="round"/><path d="M1159.4,600.0 L1166.3,600.0 L1156.8,650.0 L1148.2,698.0 L1143.9,698.0 L1152.5,645.0 Z" fill="#4e3c30" stroke="none" stroke-width="0" stroke-linejoin="round"/><path d="M1192.2,586.0 L1218.9,582.0 L1224.0,640.0 L1230.0,695.0 L1207.7,695.0 L1198.2,645.0 Z" fill="#634d3e" stroke="#121212" stroke-width="2.2" stroke-linejoin="round"/><path d="M1206.0,610.0 L1214.6,592.0 L1218.9,592.0 L1224.0,640.0 L1215.4,650.0 L1208.5,630.0 Z" fill="#4e3c30" stroke="none" stroke-width="0" stroke-linejoin="round"/><path d="M1154.0,643.3 L1157.0,639.0 L1160.0,643.3 L1166.0,639.0 L1166.0,658.5 L1163.0,665.0 L1156.0,665.0 L1154.0,657.2 Z" fill="#f2d1a4" stroke="#121212" stroke-width="1.3" stroke-linejoin="round"/><path d="M1209.0,627.0 L1211.5,623.0 L1214.0,627.0 L1219.0,623.0 L1219.0,641.0 L1216.5,647.0 L1210.7,647.0 L1209.0,639.8 Z" fill="#f2d1a4" stroke="#121212" stroke-width="1.3" stroke-linejoin="round"/><path d="M1130,718 C1130,708 1138,702 1151,702 C1165,702 1173,709 1173,719 C1173,729 1165,735 1151,735 C1137,735 1130,728 1130,718 Z" fill="#4b4a40" stroke="#121212" stroke-width="2.2" stroke-linejoin="round" /><path d="M1207,697 L1233,695 L1252,705 L1264,713 L1261,722 L1212,722 L1206,710 Z" fill="#4b4a40" stroke="#121212" stroke-width="2.2" stroke-linejoin="round" /><g transform="translate(1156,388.9) rotate(-12.7) scale(0.98)"><path d="M-6.0,82.0 L24.0,98.0 L30.0,104.0 L28.0,112.0 L14.0,120.0 L-10.0,106.0 L-10.0,92.0 Z" fill="#f2d1a4" stroke="#121212" stroke-width="2" stroke-linejoin="round"/><path d="M-9.0,82.0 L22.0,98.0 L12.0,104.0 L-12.0,96.0 Z" fill="#c9a37d" stroke="none" stroke-width="0" stroke-linejoin="round"/><path d="M-19.3,60.0 L-16.2,72.0 L-9.9,79.4 L-5.7,85.7 L1.6,90.9 L13.2,97.2 L21.6,101.4 L34.1,90.9 L41.5,80.4 L46.0,66.0 L44.0,56.0 L30.0,50.0 L10.0,50.0 L-5.0,55.0 Z" fill="#f2d1a4" stroke="#121212" stroke-width="2" stroke-linejoin="round"/><path d="M-19.3,63.7 L-16.2,72.0 L-9.9,79.4 L-5.7,85.7 L1.6,90.9 L8.0,94.0 L0.0,80.0 L-4.0,66.0 Z" fill="#c9a37d" stroke="none" stroke-width="0" stroke-linejoin="round"/><path d="M-1,72 Q7,68 14,74 L10,79 Q4,79 -1,72 Z" fill="#f6f6f6" stroke="#121212" stroke-width="1.6" stroke-linejoin="round" /><ellipse cx="8" cy="75" rx="3" ry="3" fill="#3b5aa0" stroke="none" stroke-width="0" transform="rotate(0 8 75)"/><path d="M28,78 Q34,75 39,79 L37,83 Q31,83 28,78 Z" fill="#f6f6f6" stroke="#121212" stroke-width="1.6" stroke-linejoin="round" /><ellipse cx="34" cy="80" rx="2.5" ry="2.5" fill="#3b5aa0" stroke="none" stroke-width="0" transform="rotate(0 34 80)"/><path d="M12,89 Q22,96 30,90" fill="none" stroke="#121212" stroke-width="1.8" stroke-linejoin="round" /><path d="M-31.9,62.6 L-25.6,72.0 L-26.6,76.2 L-18.3,83.6 L-14.0,80.4 L-20.4,70.0 L-20.4,62.6 Z" fill="#ef9530" stroke="#121212" stroke-width="1.8" stroke-linejoin="round"/><path d="M-41.8,58.4 L-29.8,51.1 L-16.2,41.6 L-5.7,28.0 L-1.5,12.3 L-0.5,0.8 L9.0,5.0 L19.5,13.4 L27.8,20.7 L31.5,24.9 L30.5,17.6 L28.4,9.2 L37.3,16.5 L45.6,27.0 L50.9,36.4 L52.5,46.9 L53.0,55.3 L55.6,44.8 L58.2,51.1 L57.7,64.7 L53.0,74.1 L46.7,77.3 L44.6,68.9 L27.8,58.4 L19.5,53.2 L11.1,58.4 L0.6,63.7 L-3.6,65.7 L-20.4,62.6 L-31.9,62.6 Z" fill="#fde03a" stroke="#121212" stroke-width="2.2" stroke-linejoin="round"/><path d="M-41.8,58.4 L-29.8,51.1 L-16.2,41.6 L-5.7,28.0 L-1.5,12.3 L-0.5,0.8 L3.7,17.6 L1.6,33.3 L-3.6,45.8 L-12.0,55.3 L-14.1,63.7 L-20.4,62.6 L-31.9,62.6 Z" fill="#ef9530" stroke="none" stroke-width="0" stroke-linejoin="round"/><path d="M0.6,41.6 L13.2,45.8 L27.8,49.0 L44.6,55.3 L50.9,61.6 L46.7,77.3 L44.6,68.9 L27.8,58.4 L19.5,53.2 L11.1,58.4 L0.6,63.7 L-1.5,51.1 Z" fill="#ef9530" stroke="none" stroke-width="0" stroke-linejoin="round"/><path d="M29.9,25.9 L35.2,19.6 L36.2,28.0 L31.0,33.3 Z" fill="#ef9530" stroke="none" stroke-width="0" stroke-linejoin="round"/><path d="M38.3,18.6 L45.6,27.0 L50.9,36.4 L52.5,46.9 L49.3,38.5 L43.6,28.0 Z" fill="#fff3a8" stroke="none" stroke-width="0" stroke-linejoin="round"/></g><path d="M1170.0,478.0 L1206.0,480.0 L1209.0,490.0 L1190.0,513.0 L1160.0,494.0 Z" fill="#f2d1a4" stroke="none" stroke-width="0" stroke-linejoin="round"/><path d="M1172.0,480.0 L1198.0,484.0 L1186.0,494.0 L1166.0,490.0 Z" fill="#c9a37d" stroke="none" stroke-width="0" stroke-linejoin="round"/><path d="M1158.0,492.0 L1190.0,512.0 L1211.0,488.0 L1225.0,500.0 L1233.0,526.0 L1222.0,530.0 L1218.0,590.0 L1218.0,590.0 L1211.7,594.2 L1205.4,590.4 L1199.1,594.6 L1192.8,590.8 L1186.5,595.0 L1180.2,591.2 L1173.9,595.4 L1167.6,591.6 L1161.3,595.8 L1155.0,592.0 L1152.0,545.0 L1144.0,538.0 L1150.0,510.0 Z" fill="#fbe13a" stroke="#121212" stroke-width="2.2" stroke-linejoin="round"/><path d="M1160.0,496.0 L1172.0,510.0 L1180.0,555.0 L1168.0,590.0 L1158.0,560.0 L1152.0,535.0 L1146.0,536.0 Z" fill="#dea72a" stroke="none" stroke-width="0" stroke-linejoin="round"/><path d="M1146.0,540.0 L1156.0,545.0 L1152.0,580.0 L1155.0,600.0 L1150.0,628.0 L1138.0,630.0 L1134.0,605.0 L1142.0,580.0 Z" fill="#f2d1a4" stroke="#121212" stroke-width="2" stroke-linejoin="round"/><path d="M1205.0,489.0 L1212.0,492.0 L1176.0,586.0 L1169.0,582.0 Z" fill="#7a5a41" stroke="#121212" stroke-width="1.8" stroke-linejoin="round"/><path d="M1154,561 Q1154,554 1161,554 L1172,554 Q1179,554 1179,561 L1179,583 Q1179,589 1172,589 L1161,590 Q1154,590 1154,583 Z" fill="#5a4232" stroke="#121212" stroke-width="2" stroke-linejoin="round" /><path d="M1195,543 L1233,594" stroke="#121212" stroke-width="15.0" stroke-linecap="round"/><path d="M1195,543 L1233,594" stroke="#3c4b6e" stroke-width="11.0" stroke-linecap="round"/><ellipse cx="1195" cy="543" rx="15" ry="14.25" fill="#3c4b6e" stroke="#121212" stroke-width="2.2" transform="rotate(0 1195 543)"/><path d="M1184.5,538.5 Q1195,535.5 1207.0,540.0 M1182.25,546.75 Q1195,544.5 1208.5,547.5 M1192.0,529.5 Q1189.0,543 1193.5,556.5 M1200.25,529.5 Q1198.0,543 1201.75,555.75" fill="none" stroke="#1a2234" stroke-width="1.1"/><ellipse cx="1190.5" cy="537.75" rx="5.25" ry="3.0" fill="#5a6c92" stroke="none" stroke-width="0" transform="rotate(-20 1190.5 537.75)"/><path d="M1197.0,556.0 L1220.0,553.0 L1235.0,569.0 L1234.0,589.0 L1220.0,593.0 L1202.0,582.0 L1196.0,567.0 Z" fill="#f2d1a4" stroke="#121212" stroke-width="2.2" stroke-linejoin="round"/><path d="M1203,568 L1226,566 M1205,578 L1228,577" fill="none" stroke="#121212" stroke-width="1.5" stroke-linejoin="round" /><path d="M240.5,558.8 L268.8,562.0 L268.8,580.8 L256.3,610.7 L246.8,662.5 L220.1,667.2 L221.7,662.5 L231.1,618.5 L239.0,571.4 Z" fill="#3e4a5e" stroke="#121212" stroke-width="2.4" stroke-linejoin="round"/><path d="M242.0,565.0 L250.0,566.0 L240.0,615.0 L230.0,660.0 L224.0,662.0 L232.0,618.0 Z" fill="#2f3849" stroke="none" stroke-width="0" stroke-linejoin="round"/><path d="M266.0,562.0 L289.2,562.0 L293.0,590.0 L297.1,618.5 L305.0,662.5 L286.1,665.6 L276.7,602.8 L268.8,580.8 Z" fill="#3e4a5e" stroke="#121212" stroke-width="2.4" stroke-linejoin="round"/><path d="M270.0,566.0 L278.0,566.0 L284.0,605.0 L292.0,660.0 L287.0,662.0 L276.0,605.0 Z" fill="#4f5d75" stroke="none" stroke-width="0" stroke-linejoin="round"/><path d="M218.6,680 C217,671 222,667 230,668 L247,668 C258,672 264,682 262.5,690 C261,696 255,697 245,696 L228,695 C220,693 219,686 218.6,680 Z" fill="#e0662a" stroke="#121212" stroke-width="2.4" stroke-linejoin="round" /><path d="M243,676 C252,674 261,681 262,689 C261,695 255,696 246,695 L240,693 Z" fill="#f2f2ec" stroke="#121212" stroke-width="1.4" stroke-linejoin="round" /><path d="M284.5,666 C284,662 290,662 298,663 L312,666 C325,670 333,678 333.2,686 C333,691 328,692 318,691 L293,690 C286,688 284,678 284.5,666 Z" fill="#e0662a" stroke="#121212" stroke-width="2.4" stroke-linejoin="round" /><path d="M310,675 C320,674 331,680 333,686 C333,691 326,692 318,691 L306,690 Z" fill="#f2f2ec" stroke="#121212" stroke-width="1.4" stroke-linejoin="round" /><path d="M234.0,493.0 L270.0,510.0 L290.0,497.0 L305.0,520.0 L310.0,540.0 L300.0,550.0 L290.0,559.0 L258.0,567.0 L240.5,556.0 L236.0,530.0 L228.0,556.0 L237.4,573.0 L223.3,571.4 L207.0,560.0 L202.0,538.0 L215.0,505.0 Z" fill="#f2b92e" stroke="#121212" stroke-width="2.2" stroke-linejoin="round"/><path d="M216.0,505.0 L232.0,500.0 L226.0,540.0 L224.0,568.0 L207.0,560.0 L204.0,538.0 Z" fill="#d39222" stroke="none" stroke-width="0" stroke-linejoin="round"/><path d="M236.0,500.0 L246.0,505.0 L244.0,556.0 L238.0,556.0 Z" fill="#d39222" stroke="none" stroke-width="0" stroke-linejoin="round"/><path d="M259,516 L274,515 C285,517 285,532 276,534 C287,537 286,556 276,557 L260,557 Z" fill="#7fa8ec" stroke="#121212" stroke-width="2" stroke-linejoin="round" /><path d="M265,522 L272,522 C276,523 276,530 272,530 L265,530 Z M265,539 L273,539 C278,540 278,550 273,550 L265,550 Z" fill="#f2b92e" stroke="#121212" stroke-width="1.4" stroke-linejoin="round" /><path d="M240.0,485.0 L258.0,495.0 L270.0,510.0 L283.0,496.0 L284.0,512.0 L270.0,512.0 L255.0,505.0 L240.0,495.0 Z" fill="#f3e4e4" stroke="#121212" stroke-width="1.6" stroke-linejoin="round"/><path d="M213.0,571.0 L224.0,570.0 L238.0,573.0 L240.0,582.0 L232.0,586.0 L218.0,585.0 L212.0,579.0 Z" fill="#e3b68c" stroke="#121212" stroke-width="2" stroke-linejoin="round"/><path d="M246.0,474.0 L275.0,484.0 L284.0,496.0 L260.0,508.0 L240.0,488.0 Z" fill="#e3b68c" stroke="#121212" stroke-width="1.8" stroke-linejoin="round"/><path d="M232.4,460.9 L235.9,472.3 L246.1,476.9 L256.4,484.9 L271.3,490.6 L287.3,484.9 L299.9,472.3 L304.4,460.9 L302.1,454.0 L266.7,449.4 L245.0,456.3 Z" fill="#e3b68c" stroke="#121212" stroke-width="2" stroke-linejoin="round"/><path d="M232.4,460.9 L235.9,472.3 L246.1,476.9 L256.4,484.9 L262.0,487.0 L250.0,472.0 L242.0,458.0 Z" fill="#b98c66" stroke="none" stroke-width="0" stroke-linejoin="round"/><path d="M248.4,462 Q256,456 266,458 L269,469 Q258,472 248.4,462 Z" fill="#f0ead8" stroke="#121212" stroke-width="1.6" stroke-linejoin="round" /><ellipse cx="264" cy="464.5" rx="3.6" ry="4.2" fill="#3a5aa8" stroke="none" stroke-width="0" transform="rotate(0 264 464.5)"/><path d="M284,458 Q292,455 298,460 L298,471 Q288,473 284,458 Z" fill="#f0ead8" stroke="#121212" stroke-width="1.6" stroke-linejoin="round" /><ellipse cx="291" cy="465" rx="3.2" ry="4.5" fill="#3a5aa8" stroke="none" stroke-width="0" transform="rotate(0 291 465)"/><path d="M261,475 Q268,481 274,478 Q279,482 285,480" fill="none" stroke="#121212" stroke-width="1.7" stroke-linejoin="round" /><path d="M226.7,410.6 L232.0,425.0 L218.7,430.0 L235.9,438.0 L222.0,446.0 L217.6,451.7 L223.3,458.6 L232.4,464.3 L242.7,458.6 L250.7,450.6 L266.7,447.1 L285.0,451.7 L302.1,454.0 L305.6,470.0 L312.4,476.9 L319.3,470.0 L317.0,460.9 L330.7,458.6 L328.4,441.4 L319.3,426.6 L305.6,419.7 L314.7,402.6 L290.7,411.7 L267.9,410.6 L259.9,395.7 L250.0,412.0 L238.0,420.0 Z" fill="#3b7fe0" stroke="#121212" stroke-width="2.2" stroke-linejoin="round"/><path d="M267.9,412.0 L290.7,413.0 L308.0,418.0 L296.0,424.0 L275.0,420.0 Z" fill="#55c8f4" stroke="none" stroke-width="0" stroke-linejoin="round"/><path d="M226.0,414.0 L234.0,428.0 L222.0,431.0 Z" fill="#55c8f4" stroke="none" stroke-width="0" stroke-linejoin="round"/><path d="M306.0,425.0 L322.0,432.0 L328.0,448.0 L314.0,440.0 Z" fill="#55c8f4" stroke="none" stroke-width="0" stroke-linejoin="round"/><path d="M240.0,440.0 L262.0,432.0 L290.0,436.0 L300.0,446.0 L280.0,442.0 L255.0,444.0 Z" fill="#2f6ac8" stroke="none" stroke-width="0" stroke-linejoin="round"/><path d="M329,512 L312,568" stroke="#121212" stroke-width="16.200000000000003" stroke-linecap="round"/><path d="M329,512 L312,568" stroke="#3c4b6e" stroke-width="12.200000000000001" stroke-linecap="round"/><ellipse cx="329" cy="512" rx="16.5" ry="15.674999999999999" fill="#3c4b6e" stroke="#121212" stroke-width="2.2" transform="rotate(0 329 512)"/><path d="M317.45,507.05 Q329,503.75 342.2,508.7 M314.975,516.125 Q329,513.65 343.85,516.95 M325.7,497.15 Q322.4,512 327.35,526.85 M334.775,497.15 Q332.3,512 336.425,526.025" fill="none" stroke="#1a2234" stroke-width="1.1"/><ellipse cx="324.05" cy="506.225" rx="5.7749999999999995" ry="3.3000000000000003" fill="#5a6c92" stroke="none" stroke-width="0" transform="rotate(-20 324.05 506.225)"/><path d="M302.0,527.0 L324.0,523.0 L337.0,538.0 L336.0,556.0 L320.0,561.0 L304.0,552.0 L300.0,538.0 Z" fill="#e3b68c" stroke="#121212" stroke-width="2.2" stroke-linejoin="round"/><path d="M309,537 L330,535 M310,547 L331,546" fill="none" stroke="#121212" stroke-width="1.5" stroke-linejoin="round" /></svg>
<svg style="left:13px;top:51px" width="9" height="6" viewBox="0 0 9 6"><path d="M4 0.5 L1 3 L4 5.5 M8 0.5 L5 3 L8 5.5" fill="none" stroke="#d0d0d0" stroke-width="1.2"/></svg>
<div class="a" style="left:8px;top:59px;width:54px;height:1px;background:#292929;"></div>
<div class="a" style="left:24px;top:60px;width:38px;height:16px;background:#2e2e2e;"></div>
<svg style="left:47px;top:64px" width="10" height="8" viewBox="0 0 10 8"><path d="M0 0.5 H10 M0 2.5 H10 M0 4.5 H10 M0 6.5 H10" stroke="#c8c8c8" stroke-width="1"/></svg>
<svg style="left:30px;top:94px" width="13" height="17" viewBox="0 0 13 17"><path d="M0.8 0.8 L12 9.5 L6 9.5 L0.8 16 Z" fill="none" stroke="#c8c8c8" stroke-width="1.4" stroke-linejoin="miter"/></svg>
<svg style="left:46px;top:113px" width="4" height="4" viewBox="0 0 4 4"><path d="M4 0 L4 4 L0 4 Z" fill="#c8c8c8"/></svg>
<svg style="left:25px;top:128px" width="21" height="15" viewBox="0 0 21 15"><rect x="6.5" y="1.8" width="12.5" height="11.5" fill="none" stroke="#c8c8c8" stroke-width="1.2"/><g fill="#c8c8c8"><rect x="5.2" y="0.5" width="2.6" height="2.6"/><rect x="17.7" y="0.5" width="2.6" height="2.6"/><rect x="5.2" y="12" width="2.6" height="2.6"/><rect x="17.7" y="12" width="2.6" height="2.6"/><rect x="11.5" y="12" width="2.6" height="2.6"/><rect x="17.7" y="6.2" width="2.6" height="2.6"/><rect x="11.5" y="0.5" width="2.6" height="2.6"/></g><path d="M0 0.5 L9.5 7 L4.5 7.5 L0.5 13.5 Z" fill="#c8c8c8" stroke="#323232" stroke-width="0.6"/></svg>
<svg style="left:46px;top:147px" width="4" height="4" viewBox="0 0 4 4"><path d="M4 0 L4 4 L0 4 Z" fill="#c8c8c8"/></svg>
<svg style="left:26px;top:162px" width="18" height="17" viewBox="0 0 18 17"><ellipse cx="9.5" cy="6" rx="7.5" ry="5" fill="none" stroke="#c8c8c8" stroke-width="1.2"/><circle cx="4" cy="10" r="2" fill="none" stroke="#c8c8c8" stroke-width="1.1"/><path d="M4 12 C5 14 4 16 2.5 16" fill="none" stroke="#c8c8c8" stroke-width="1.1"/></svg>
<svg style="left:46px;top:181px" width="4" height="4" viewBox="0 0 4 4"><path d="M4 0 L4 4 L0 4 Z" fill="#c8c8c8"/></svg>
<div class="a" style="left:21px;top:190px;width:30px;height:2px;background:#262626;"></div>
<svg style="left:27px;top:204px" width="18" height="16" viewBox="0 0 18 16"><path d="M15.5 0.5 L16.8 1.5 L9.5 10.5 L7.5 9 Z" fill="#c8c8c8"/><path d="M7 9.5 L9 11 C8.5 14 5 15.5 0.5 15.5 C2 14 3 10 7 9.5 Z" fill="#c8c8c8"/><circle cx="13" cy="12.5" r="3.5" fill="#8a8a8a"/></svg>
<svg style="left:27px;top:238px" width="17" height="17" viewBox="0 0 17 17"><path d="M15.5 0.5 L16.8 1.7 L9.5 11 L7.5 9.5 Z" fill="#c8c8c8"/><path d="M7 10 L9 11.5 C8.5 14.5 5 16 0.5 16 C2 14.5 3 10.5 7 10 Z" fill="#c8c8c8"/></svg>
<svg style="left:27px;top:272px" width="17" height="17" viewBox="0 0 17 17"><path d="M10 0.8 L16.2 7 L9 14.2 L2.8 8 Z" fill="#c8c8c8"/><path d="M2.8 8 L9 14.2 L7 16.2 L3 16.2 L0.8 14 L0.8 10 Z" fill="none" stroke="#c8c8c8" stroke-width="1.3"/></svg>
<svg style="left:27px;top:306px" width="16" height="16" viewBox="0 0 16 16"><rect x="0.8" y="0.8" width="14.4" height="13.6" fill="#5c5c5c" stroke="#c8c8c8" stroke-width="1.5"/></svg>
<svg style="left:46px;top:324px" width="4" height="4" viewBox="0 0 4 4"><path d="M4 0 L4 4 L0 4 Z" fill="#c8c8c8"/></svg>
<svg style="left:27px;top:340px" width="16" height="16" viewBox="0 0 16 16"><path d="M0.5 15.5 L15.5 0.5" stroke="#c8c8c8" stroke-width="1.5"/></svg>
<div class="a" style="left:21px;top:368px;width:30px;height:2px;background:#262626;"></div>
<svg style="left:26px;top:382px" width="17" height="17" viewBox="0 0 17 17"><path d="M11 1 L13.5 0.5 L16.5 3.5 L16 6 Z" fill="#c8c8c8"/><path d="M10 2.5 L14.5 7 L11 12 L1 16.5 L5 6.5 Z" fill="#c8c8c8"/><path d="M1.5 16 L7 10.5" stroke="#323232" stroke-width="1.1"/><circle cx="7.8" cy="9.2" r="1.2" fill="#323232"/></svg>
<svg style="left:46px;top:400px" width="4" height="4" viewBox="0 0 4 4"><path d="M4 0 L4 4 L0 4 Z" fill="#c8c8c8"/></svg>
<svg style="left:27px;top:416px" width="16" height="16" viewBox="0 0 16 16"><path d="M1 4 L1 1 L15 1 L15 4 M8 1 L8 15 M5 15 L11 15" fill="none" stroke="#c8c8c8" stroke-width="1.8"/></svg>
<div class="a" style="left:19px;top:442px;width:32px;height:32px;background:#4a4a4a;border-radius:4px"></div>
<svg style="left:26px;top:449px" width="18" height="18" viewBox="0 0 18 18"><path d="M7.5 4.5 L13.5 10.5 L8 16 L2 10 Z" fill="#f4f4f4"/><path d="M3 1 L9 7" stroke="#f4f4f4" stroke-width="1.3"/><path d="M13.5 10.5 C15.5 11.5 16.5 13 15.5 15 C14.5 16 13 15 13.5 13 Z" fill="#f4f4f4"/></svg>
<svg style="left:46px;top:469px" width="4" height="4" viewBox="0 0 4 4"><path d="M4 0 L4 4 L0 4 Z" fill="#c8c8c8"/></svg>
<svg style="left:26px;top:484px" width="17" height="17" viewBox="0 0 17 17"><path d="M12 0.8 C14 0 16.5 2.5 15.8 4.5 L13.5 6.5 L10 3 Z" fill="#c8c8c8"/><path d="M9 4.5 L12 7.5" stroke="#c8c8c8" stroke-width="2"/><path d="M10 6 L3 13 C2 14 2 15.5 1 16 C1.5 15 2.5 15 3.5 14 L11 7" fill="none" stroke="#c8c8c8" stroke-width="1.3"/></svg>
<svg style="left:25px;top:518px" width="16" height="15" viewBox="0 0 16 15"><path d="M8 1 L14.5 7.5 L12.5 8 L9.5 11 L9.5 13 L2.5 6 L4.5 6 L7.5 3 Z" fill="#c8c8c8"/><path d="M5 9 L0.8 14" stroke="#c8c8c8" stroke-width="1.3"/></svg>
<div class="a" style="left:21px;top:546px;width:30px;height:2px;background:#262626;"></div>
<svg style="left:26px;top:559px" width="17" height="18" viewBox="0 0 17 18"><path d="M4 9 L4 3 C4 2 5.5 2 5.5 3 L5.5 8 L5.5 1.5 C5.5 0.5 7.2 0.5 7.2 1.5 L7.2 8 L7.2 1 C7.2 0 9 0 9 1 L9 8 L9 2 C9 1 10.7 1 10.7 2 L10.7 10 L13 7 C14 6 15.5 7 14.5 8 L11 13.5 C10 16 8.5 17 6.5 17 C4.5 17 3 15.5 2 13 L0.5 8.5 C0 7.5 1.5 6.5 2.3 7.5 Z" fill="#c8c8c8"/></svg>
<svg style="left:46px;top:580px" width="4" height="4" viewBox="0 0 4 4"><path d="M4 0 L4 4 L0 4 Z" fill="#c8c8c8"/></svg>
<svg style="left:26px;top:594px" width="17" height="17" viewBox="0 0 17 17"><circle cx="6.5" cy="6.5" r="5.6" fill="none" stroke="#c8c8c8" stroke-width="1.5"/><path d="M10.5 10.5 L16 16" stroke="#c8c8c8" stroke-width="2"/></svg>
<svg style="left:26px;top:639px" width="18" height="6" viewBox="0 0 18 6"><circle cx="3" cy="3" r="1.9" fill="#c8c8c8"/><circle cx="9" cy="3" r="1.9" fill="#c8c8c8"/><circle cx="15" cy="3" r="1.9" fill="#c8c8c8"/></svg>
<svg style="left:19px;top:660px" width="13" height="13" viewBox="0 0 13 13"><rect x="4.5" y="4.5" width="7.5" height="7.5" fill="#000" stroke="#c8c8c8" stroke-width="1"/><rect x="1" y="1" width="7.5" height="7.5" fill="#fff" stroke="#1a1a1a" stroke-width="1"/></svg>
<svg style="left:38px;top:660px" width="12" height="13" viewBox="0 0 12 13"><path d="M1 4.5 L4 1.5 L4 3.5 C8 3.5 9 5 9 9 L11 9 L8 12 L5 9 L7 9 C7 6.5 6 5.5 4 5.5 L4 7.5 Z" fill="#c8c8c8"/></svg>
<div class="a" style="left:30px;top:690px;width:20px;height:20px;background:#fff;padding:1px"><div style="width:18px;height:18px;border:3px solid #00e8f5;background:#323232"><div style="margin:1px;width:10px;height:10px;border:1px solid #ffffff;"></div></div></div>
<div class="a" style="left:20px;top:679px;width:21px;height:21px;background:#fff;padding:1px"><div style="width:19px;height:19px;background:#f4922e"></div></div>
<svg style="left:27px;top:723px" width="16" height="16" viewBox="0 0 16 16"><rect x="1" y="1" width="13" height="13" fill="none" stroke="#c0c0c0" stroke-width="2"/></svg>
<svg style="left:46px;top:741px" width="4" height="4" viewBox="0 0 4 4"><path d="M4 0 L4 4 L0 4 Z" fill="#c8c8c8"/></svg>
<div class="a" style="left:19px;top:749px;width:32px;height:32px;background:#464646;border-radius:5px"></div>
<svg style="left:26px;top:757px" width="21" height="17" viewBox="0 0 21 17"><defs><linearGradient id="gr1" x1="0" x2="1" y1="0" y2="1"><stop offset="0" stop-color="#fff"/><stop offset="1" stop-color="#222"/></linearGradient></defs><rect x="0.5" y="0.5" width="15" height="14.5" fill="url(#gr1)" stroke="#fff" stroke-width="1"/><rect x="11" y="7.5" width="9.5" height="8.5" rx="1" fill="#fff"/><path d="M12.8 7.5 V5.8 C12.8 3.5 18.7 3.5 18.7 5.8 V7.5" fill="none" stroke="#fff" stroke-width="1.5"/><rect x="15" y="10" width="1.5" height="3.5" fill="#464646"/></svg>
<div class="a" style="left:65px;top:860px;width:1555px;height:17px;background:#2c2c2c;"></div>
<div class="a" style="left:65px;top:860px;width:56px;height:17px;background:#323232;"></div>
<div class="a" style="left:121px;top:860px;width:1px;height:17px;background:#262626;"></div>
<div class="a" style="left:170px;top:860px;width:1px;height:17px;background:#262626;"></div>
<div class="a" style="left:121px;top:877px;width:1499px;height:1px;background:#262626;"></div>
<svg style="left:1605px;top:865px" width="10" height="8" viewBox="0 0 10 8"><path d="M0 0.5 H10 M0 2.5 H10 M0 4.5 H10 M0 6.5 H10" stroke="#c8c8c8" stroke-width="1"/></svg>
<div class="a" style="left:324px;top:878px;width:1px;height:162px;background:#262626;"></div>
<div class="a" style="left:65px;top:926px;width:259px;height:1px;background:#262626;"></div>
<svg style="left:85px;top:894px" width="17" height="18" viewBox="0 0 17 18"><path d="M8.5 0.5 L16 4.5 L8.5 8.5 L1 4.5 Z" fill="#c8c8c8"/><path d="M1.5 8 L8.5 12 L15.5 8 M1.5 12 L8.5 16 L15.5 12" fill="none" stroke="#c8c8c8" stroke-width="2"/></svg>
<svg style="left:224px;top:897px" width="17" height="12" viewBox="0 0 17 12"><rect x="0.5" y="0.5" width="11" height="10.5" rx="1" fill="#c8c8c8"/><path d="M11 5.5 L16 1.5 L16 10 Z" fill="#c8c8c8"/></svg>
<svg style="left:257px;top:895px" width="15" height="15" viewBox="0 0 15 15"><rect x="4.5" y="0.5" width="5.5" height="4" fill="#c8c8c8"/><rect x="0" y="10" width="5" height="4.5" fill="#c8c8c8"/><rect x="9.5" y="10" width="5" height="4.5" fill="#c8c8c8"/><path d="M7.2 4 V7.5 M2.5 10.5 V7.5 H12 V10.5" fill="none" stroke="#c8c8c8" stroke-width="1"/></svg>
<svg style="left:288px;top:895px" width="16" height="16" viewBox="0 0 16 16"><path d="M0.7 0 V15.3 H15" fill="none" stroke="#c8c8c8" stroke-width="1"/><path d="M3 13 L12 5" stroke="#c8c8c8" stroke-width="1.3"/><path d="M8.5 4 L13 3 L12 7.5 Z" fill="#c8c8c8"/></svg>
<svg style="left:85px;top:940px" width="15" height="14" viewBox="0 0 15 14"><rect x="0.6" y="0.6" width="13" height="12.5" fill="none" stroke="#c8c8c8" stroke-width="1.2"/><path d="M7.1 3 V10.5 M3.3 6.8 H10.8" stroke="#c8c8c8" stroke-width="1.2"/></svg>
<svg style="left:117px;top:940px" width="17" height="14" viewBox="0 0 17 14"><path d="M0 1.5 C0 0.5 0.5 0 1.5 0 L6 0 L7.5 2 L15 2 C16 2 16.5 2.5 16.5 3.5 L16.5 13.3 L0 13.3 Z" fill="#c8c8c8"/><path d="M0 3.5 H16.5" stroke="#323232" stroke-width="0.8"/></svg>
<svg style="left:149px;top:939px" width="16" height="16" viewBox="0 0 16 16"><path d="M0.5 2.5 H15 M5.5 2.5 V0.8 H10 V2.5" fill="none" stroke="#c8c8c8" stroke-width="1.4"/><path d="M1.8 4 L14 4 L12.8 15.5 L3 15.5 Z" fill="#c8c8c8"/><path d="M5.5 6 V13.5 M7.9 6 V13.5 M10.3 6 V13.5" stroke="#323232" stroke-width="1"/></svg>
<svg style="left:222px;top:944px" width="6" height="6" viewBox="0 0 6 6"><circle cx="3" cy="3" r="2.7" fill="#c8c8c8"/></svg>
<div class="a" style="left:243px;top:939px;width:8px;height:16px;border:2px solid #c8c8c8"></div>
<svg style="left:265px;top:939px" width="17" height="16" viewBox="0 0 17 16"><path d="M1 8.5 C3.5 4 13.5 4 16 8.5 C13.5 13 3.5 13 1 8.5 Z" fill="none" stroke="#c8c8c8" stroke-width="2"/><circle cx="8.5" cy="8.5" r="2.8" fill="#c8c8c8"/><path d="M2.5 1 L15 15.5" stroke="#c8c8c8" stroke-width="1.3"/></svg>
<svg style="left:293px;top:940px" width="13" height="15" viewBox="0 0 13 15"><rect x="0.5" y="6.5" width="12" height="8.5" rx="1" fill="#c8c8c8"/><path d="M3 7 V4.5 C3 0.5 10 0.5 10 4.5 V7" fill="none" stroke="#c8c8c8" stroke-width="2"/><rect x="5.8" y="9" width="1.6" height="3.5" fill="#323232"/></svg>
<div class="a" style="left:65px;top:968px;width:259px;height:24px;background:#386396;"></div>
<div class="a" style="left:65px;top:992px;width:259px;height:1px;background:#262626;"></div>
<div class="a" style="left:65px;top:1017px;width:259px;height:1px;background:#262626;"></div>
<svg style="left:94px;top:974px" width="13" height="13" viewBox="0 0 13 13"><path d="M0.6 0.6 H12.4 V12.4 H5 L0.6 8 Z" fill="#5e5e5e" stroke="#c8c8c8" stroke-width="1.2"/><path d="M0.6 8 H5 V12.4" fill="none" stroke="#c8c8c8" stroke-width="1.2"/></svg>
<svg style="left:94px;top:999px" width="13" height="13" viewBox="0 0 13 13"><path d="M0.6 0.6 H12.4 V12.4 H5 L0.6 8 Z" fill="#5e5e5e" stroke="#c8c8c8" stroke-width="1.2"/><path d="M0.6 8 H5 V12.4" fill="none" stroke="#c8c8c8" stroke-width="1.2"/></svg>
<svg style="left:222px;top:978px" width="6" height="6" viewBox="0 0 6 6"><circle cx="3" cy="3" r="2.5" fill="#a23fe0"/></svg>
<div class="a" style="left:245px;top:974px;width:6px;height:12px;background:#a033d4;"></div>
<div class="a" style="left:245px;top:999px;width:6px;height:12px;background:#00eef0;"></div>
<svg style="left:265px;top:972px" width="17" height="16" viewBox="0 0 17 16"><path d="M1 8.5 C3.5 4 13.5 4 16 8.5 C13.5 13 3.5 13 1 8.5 Z" fill="none" stroke="#c0c8d8" stroke-width="2"/><circle cx="8.5" cy="8.5" r="2.8" fill="#c0c8d8"/><path d="M2.5 1 L15 15.5" stroke="#c0c8d8" stroke-width="1.3"/></svg>
<svg style="left:293px;top:974px" width="11" height="13" viewBox="0 0 13 15"><rect x="0.5" y="6.5" width="12" height="8.5" rx="1" fill="#c8ccd8"/><path d="M3 7 V4.5 C3 0.5 10 0.5 10 4.5 V7" fill="none" stroke="#c8ccd8" stroke-width="2"/><rect x="5.8" y="9" width="1.6" height="3.5" fill="#323232"/></svg>
<div class="a" style="left:65px;top:1040px;width:1555px;height:1px;background:#262626;"></div>
<div class="a" style="left:459px;top:901px;width:1.5px;height:2px;background:#bbbbbb;"></div>
<svg style="left:794px;top:897px" width="13" height="13" viewBox="0 0 13 13"><rect x="0" y="0" width="12.5" height="12.5" fill="#c8c8c8"/><circle cx="6.2" cy="6.5" r="2" fill="#323232"/></svg>
<svg style="left:828px;top:897px" width="13" height="13" viewBox="0 0 13 13"><rect x="0" y="0" width="12.5" height="12.5" fill="#c8c8c8"/><circle cx="6.2" cy="6.5" r="2.4" fill="none" stroke="#323232" stroke-width="1.3"/></svg>
<svg style="left:862px;top:897px" width="13" height="13" viewBox="0 0 13 13"><rect x="0" y="0" width="12.5" height="12.5" fill="#c8c8c8"/><rect x="5.4" y="3.5" width="1.8" height="6.5" fill="#323232"/></svg>
<div class="a" style="left:886px;top:887px;width:32px;height:32px;background:#484848;border-radius:4px"></div>
<svg style="left:895px;top:893px" width="18" height="19" viewBox="0 0 18 19"><rect x="0.5" y="4" width="12.5" height="12.5" fill="#c8c8c8"/><circle cx="6.7" cy="10.2" r="2" fill="#484848"/><path d="M9 9 L12 0.5 L15 9 M10 6 L14 6" fill="none" stroke="#c8c8c8" stroke-width="1.3"/><path d="M17.5 15 L17.5 18 L14.5 18 Z" fill="#c8c8c8"/></svg>
<svg style="left:929px;top:896px" width="17" height="17" viewBox="0 0 17 17"><rect x="0.5" y="0.5" width="12" height="12" fill="#c8c8c8"/><circle cx="11.5" cy="11.5" r="5" fill="#c8c8c8" stroke="#323232" stroke-width="1.2"/><path d="M9 11.5 H14" stroke="#323232" stroke-width="1.6"/></svg>
<div class="a" style="left:955px;top:888px;width:1px;height:31px;background:#474747;"></div>
<svg style="left:965px;top:896px" width="19" height="14" viewBox="0 0 19 14"><circle cx="5.5" cy="7" r="5.3" fill="#8a8a8a"/><circle cx="10.5" cy="7" r="5.5" fill="#c8c8c8"/><path d="M18 10.5 L18 13.5 L15 13.5 Z" fill="#c8c8c8"/></svg>
<svg style="left:1001px;top:897px" width="15" height="12" viewBox="0 0 15 12"><rect x="0" y="4" width="8" height="8" fill="#505050"/><rect x="6" y="0" width="8" height="8" fill="#5a5a5a"/></svg>
<svg style="left:1035px;top:897px" width="15" height="12" viewBox="0 0 15 12"><rect x="0" y="4" width="8" height="8" fill="#505050"/><rect x="6" y="0" width="8" height="8" fill="#5a5a5a"/></svg>
<svg style="left:1069px;top:897px" width="15" height="12" viewBox="0 0 15 12"><rect x="0" y="4" width="8" height="8" fill="#505050"/><rect x="6" y="0" width="8" height="8" fill="#5a5a5a"/></svg>
<div class="a" style="left:1094px;top:888px;width:1px;height:31px;background:#474747;"></div>
<div class="a" style="left:1098px;top:887px;width:32px;height:32px;background:#484848;border-radius:4px"></div>
<svg style="left:1105px;top:894px" width="17" height="15" viewBox="0 0 17 15"><path d="M1 5 V13.5 H15.5 V10" fill="none" stroke="#d0d0d0" stroke-width="1.8"/><path d="M4 10 C4 6 7 5 11 5" fill="none" stroke="#d0d0d0" stroke-width="1.8"/><path d="M10.5 1 L15.5 5 L10.5 9 Z" fill="#d0d0d0"/></svg>
<svg style="left:1142px;top:897px" width="13" height="12" viewBox="0 0 13 12"><path d="M0.5 0 L12.5 6 L0.5 12 Z" fill="#c8c8c8"/></svg>
<svg style="left:1453px;top:896px" width="18" height="14" viewBox="0 0 18 14"><path d="M4 5 H11 C14.5 5 16 6.5 16 10" fill="none" stroke="#c8c8c8" stroke-width="1.8"/><path d="M0.5 5 L5 1 L5 9 Z" fill="#c8c8c8"/><path d="M1 12.5 H17" stroke="#c8c8c8" stroke-width="1.8"/></svg>
<div class="a" style="left:1482px;top:902px;width:14px;height:2px;background:#c8c8c8;"></div>
<svg style="left:1498px;top:896px" width="14" height="14" viewBox="0 0 14 14"><circle cx="7" cy="7" r="5.5" fill="none" stroke="#c8c8c8" stroke-width="2"/></svg>
<div class="a" style="left:1514px;top:902px;width:58px;height:2px;background:#5a5a5a;"></div>
<svg style="left:1582px;top:897px" width="21" height="12" viewBox="0 0 21 12"><path d="M0 11.5 L5 3 L6.5 3 L2 11.5 Z" fill="#c8c8c8"/><path d="M4 11.5 L11.5 0.5 L19.5 11.5 Z" fill="#c8c8c8"/></svg>
<div class="a" style="left:325px;top:927px;width:1295px;height:14px;background:#2e2e2e;"></div>
<div class="a" style="left:325px;top:941px;width:1279px;height:27px;background:#323232;"></div>
<div class="a" style="left:325px;top:941px;width:1279px;height:11px;background:#2d2d2d;"></div>
<div class="a" style="left:325px;top:927px;width:303px;height:14px;background:#2c5c97;"></div>
<div class="a" style="left:355.5px;top:927px;width:1px;height:14px;background:#30609c"></div><div class="a" style="left:395.5px;top:927px;width:1px;height:14px;background:#30609c"></div><div class="a" style="left:435.5px;top:927px;width:1px;height:14px;background:#30609c"></div><div class="a" style="left:475.5px;top:927px;width:1px;height:14px;background:#30609c"></div><div class="a" style="left:515.5px;top:927px;width:1px;height:14px;background:#30609c"></div><div class="a" style="left:555.5px;top:927px;width:1px;height:14px;background:#30609c"></div><div class="a" style="left:595.5px;top:927px;width:1px;height:14px;background:#30609c"></div><div class="a" style="left:635.5px;top:927px;width:1px;height:14px;background:#262626"></div><div class="a" style="left:675.5px;top:927px;width:1px;height:14px;background:#262626"></div><div class="a" style="left:715.5px;top:927px;width:1px;height:14px;background:#262626"></div><div class="a" style="left:755.5px;top:927px;width:1px;height:14px;background:#262626"></div><div class="a" style="left:795.5px;top:927px;width:1px;height:14px;background:#262626"></div><div class="a" style="left:835.5px;top:927px;width:1px;height:14px;background:#262626"></div><div class="a" style="left:875.5px;top:927px;width:1px;height:14px;background:#262626"></div><div class="a" style="left:915.5px;top:927px;width:1px;height:14px;background:#262626"></div><div class="a" style="left:955.5px;top:927px;width:1px;height:14px;background:#262626"></div><div class="a" style="left:995.5px;top:927px;width:1px;height:14px;background:#262626"></div><div class="a" style="left:1035.5px;top:927px;width:1px;height:14px;background:#262626"></div><div class="a" style="left:1075.5px;top:927px;width:1px;height:14px;background:#262626"></div><div class="a" style="left:1115.5px;top:927px;width:1px;height:14px;background:#262626"></div><div class="a" style="left:1155.5px;top:927px;width:1px;height:14px;background:#262626"></div><div class="a" style="left:1195.5px;top:927px;width:1px;height:14px;background:#262626"></div><div class="a" style="left:1235.5px;top:927px;width:1px;height:14px;background:#262626"></div><div class="a" style="left:1275.5px;top:927px;width:1px;height:14px;background:#262626"></div><div class="a" style="left:1315.5px;top:927px;width:1px;height:14px;background:#262626"></div><div class="a" style="left:1355.5px;top:927px;width:1px;height:14px;background:#262626"></div><div class="a" style="left:1395.5px;top:927px;width:1px;height:14px;background:#262626"></div><div class="a" style="left:1435.5px;top:927px;width:1px;height:14px;background:#262626"></div><div class="a" style="left:1475.5px;top:927px;width:1px;height:14px;background:#262626"></div><div class="a" style="left:1515.5px;top:927px;width:1px;height:14px;background:#262626"></div><div class="a" style="left:1555.5px;top:927px;width:1px;height:14px;background:#262626"></div><div class="a" style="left:1595.5px;top:927px;width:1px;height:14px;background:#262626"></div>
<div class="a" style="left:323.5px;top:942px;width:1px;height:10px;background:#2a2a2a"></div><div class="a" style="left:331.5px;top:942px;width:1px;height:10px;background:#2a2a2a"></div><div class="a" style="left:339.5px;top:942px;width:1px;height:10px;background:#2a2a2a"></div><div class="a" style="left:347.5px;top:942px;width:1px;height:10px;background:#2a2a2a"></div><div class="a" style="left:355.5px;top:942px;width:1px;height:10px;background:#2a2a2a"></div><div class="a" style="left:363.5px;top:942px;width:1px;height:10px;background:#2a2a2a"></div><div class="a" style="left:371.5px;top:942px;width:1px;height:10px;background:#2a2a2a"></div><div class="a" style="left:379.5px;top:942px;width:1px;height:10px;background:#2a2a2a"></div><div class="a" style="left:387.5px;top:942px;width:1px;height:10px;background:#2a2a2a"></div><div class="a" style="left:395.5px;top:942px;width:1px;height:10px;background:#2a2a2a"></div><div class="a" style="left:403.5px;top:942px;width:1px;height:10px;background:#2a2a2a"></div><div class="a" style="left:411.5px;top:942px;width:1px;height:10px;background:#2a2a2a"></div><div class="a" style="left:419.5px;top:942px;width:1px;height:10px;background:#2a2a2a"></div><div class="a" style="left:427.5px;top:942px;width:1px;height:10px;background:#2a2a2a"></div><div class="a" style="left:435.5px;top:942px;width:1px;height:10px;background:#2a2a2a"></div><div class="a" style="left:443.5px;top:942px;width:1px;height:10px;background:#2a2a2a"></div><div class="a" style="left:451.5px;top:942px;width:1px;height:10px;background:#2a2a2a"></div><div class="a" style="left:459.5px;top:942px;width:1px;height:10px;background:#2a2a2a"></div><div class="a" style="left:467.5px;top:942px;width:1px;height:10px;background:#2a2a2a"></div><div class="a" style="left:475.5px;top:942px;width:1px;height:10px;background:#2a2a2a"></div><div class="a" style="left:483.5px;top:942px;width:1px;height:10px;background:#2a2a2a"></div><div class="a" style="left:491.5px;top:942px;width:1px;height:10px;background:#2a2a2a"></div><div class="a" style="left:499.5px;top:942px;width:1px;height:10px;background:#2a2a2a"></div><div class="a" style="left:507.5px;top:942px;width:1px;height:10px;background:#2a2a2a"></div><div class="a" style="left:515.5px;top:942px;width:1px;height:10px;background:#2a2a2a"></div><div class="a" style="left:523.5px;top:942px;width:1px;height:10px;background:#2a2a2a"></div><div class="a" style="left:531.5px;top:942px;width:1px;height:10px;background:#2a2a2a"></div><div class="a" style="left:539.5px;top:942px;width:1px;height:10px;background:#2a2a2a"></div><div class="a" style="left:547.5px;top:942px;width:1px;height:10px;background:#2a2a2a"></div><div class="a" style="left:555.5px;top:942px;width:1px;height:10px;background:#2a2a2a"></div><div class="a" style="left:563.5px;top:942px;width:1px;height:10px;background:#2a2a2a"></div><div class="a" style="left:571.5px;top:942px;width:1px;height:10px;background:#2a2a2a"></div><div class="a" style="left:579.5px;top:942px;width:1px;height:10px;background:#2a2a2a"></div><div class="a" style="left:587.5px;top:942px;width:1px;height:10px;background:#2a2a2a"></div><div class="a" style="left:595.5px;top:942px;width:1px;height:10px;background:#2a2a2a"></div><div class="a" style="left:603.5px;top:942px;width:1px;height:10px;background:#2a2a2a"></div><div class="a" style="left:611.5px;top:942px;width:1px;height:10px;background:#2a2a2a"></div><div class="a" style="left:619.5px;top:942px;width:1px;height:10px;background:#2a2a2a"></div><div class="a" style="left:627.5px;top:942px;width:1px;height:10px;background:#2a2a2a"></div><div class="a" style="left:635.5px;top:942px;width:1px;height:10px;background:#2a2a2a"></div><div class="a" style="left:643.5px;top:942px;width:1px;height:10px;background:#2a2a2a"></div><div class="a" style="left:651.5px;top:942px;width:1px;height:10px;background:#2a2a2a"></div><div class="a" style="left:659.5px;top:942px;width:1px;height:10px;background:#2a2a2a"></div><div class="a" style="left:667.5px;top:942px;width:1px;height:10px;background:#2a2a2a"></div><div class="a" style="left:675.5px;top:942px;width:1px;height:10px;background:#2a2a2a"></div><div class="a" style="left:683.5px;top:942px;width:1px;height:10px;background:#2a2a2a"></div><div class="a" style="left:691.5px;top:942px;width:1px;height:10px;background:#2a2a2a"></div><div class="a" style="left:699.5px;top:942px;width:1px;height:10px;background:#2a2a2a"></div><div class="a" style="left:707.5px;top:942px;width:1px;height:10px;background:#2a2a2a"></div><div class="a" style="left:715.5px;top:942px;width:1px;height:10px;background:#2a2a2a"></div><div class="a" style="left:723.5px;top:942px;width:1px;height:10px;background:#2a2a2a"></div><div class="a" style="left:731.5px;top:942px;width:1px;height:10px;background:#2a2a2a"></div><div class="a" style="left:739.5px;top:942px;width:1px;height:10px;background:#2a2a2a"></div><div class="a" style="left:747.5px;top:942px;width:1px;height:10px;background:#2a2a2a"></div><div class="a" style="left:755.5px;top:942px;width:1px;height:10px;background:#2a2a2a"></div><div class="a" style="left:763.5px;top:942px;width:1px;height:10px;background:#2a2a2a"></div><div class="a" style="left:771.5px;top:942px;width:1px;height:10px;background:#2a2a2a"></div><div class="a" style="left:779.5px;top:942px;width:1px;height:10px;background:#2a2a2a"></div><div class="a" style="left:787.5px;top:942px;width:1px;height:10px;background:#2a2a2a"></div><div class="a" style="left:795.5px;top:942px;width:1px;height:10px;background:#2a2a2a"></div><div class="a" style="left:803.5px;top:942px;width:1px;height:10px;background:#2a2a2a"></div><div class="a" style="left:811.5px;top:942px;width:1px;height:10px;background:#2a2a2a"></div><div class="a" style="left:819.5px;top:942px;width:1px;height:10px;background:#2a2a2a"></div><div class="a" style="left:827.5px;top:942px;width:1px;height:10px;background:#2a2a2a"></div><div class="a" style="left:835.5px;top:942px;width:1px;height:10px;background:#2a2a2a"></div><div class="a" style="left:843.5px;top:942px;width:1px;height:10px;background:#2a2a2a"></div><div class="a" style="left:851.5px;top:942px;width:1px;height:10px;background:#2a2a2a"></div><div class="a" style="left:859.5px;top:942px;width:1px;height:10px;background:#2a2a2a"></div><div class="a" style="left:867.5px;top:942px;width:1px;height:10px;background:#2a2a2a"></div><div class="a" style="left:875.5px;top:942px;width:1px;height:10px;background:#2a2a2a"></div><div class="a" style="left:883.5px;top:942px;width:1px;height:10px;background:#2a2a2a"></div><div class="a" style="left:891.5px;top:942px;width:1px;height:10px;background:#2a2a2a"></div><div class="a" style="left:899.5px;top:942px;width:1px;height:10px;background:#2a2a2a"></div><div class="a" style="left:907.5px;top:942px;width:1px;height:10px;background:#2a2a2a"></div><div class="a" style="left:915.5px;top:942px;width:1px;height:10px;background:#2a2a2a"></div><div class="a" style="left:923.5px;top:942px;width:1px;height:10px;background:#2a2a2a"></div><div class="a" style="left:931.5px;top:942px;width:1px;height:10px;background:#2a2a2a"></div><div class="a" style="left:939.5px;top:942px;width:1px;height:10px;background:#2a2a2a"></div><div class="a" style="left:947.5px;top:942px;width:1px;height:10px;background:#2a2a2a"></div><div class="a" style="left:955.5px;top:942px;width:1px;height:10px;background:#2a2a2a"></div><div class="a" style="left:963.5px;top:942px;width:1px;height:10px;background:#2a2a2a"></div><div class="a" style="left:971.5px;top:942px;width:1px;height:10px;background:#2a2a2a"></div><div class="a" style="left:979.5px;top:942px;width:1px;height:10px;background:#2a2a2a"></div><div class="a" style="left:987.5px;top:942px;width:1px;height:10px;background:#2a2a2a"></div><div class="a" style="left:995.5px;top:942px;width:1px;height:10px;background:#2a2a2a"></div><div class="a" style="left:1003.5px;top:942px;width:1px;height:10px;background:#2a2a2a"></div><div class="a" style="left:1011.5px;top:942px;width:1px;height:10px;background:#2a2a2a"></div><div class="a" style="left:1019.5px;top:942px;width:1px;height:10px;background:#2a2a2a"></div><div class="a" style="left:1027.5px;top:942px;width:1px;height:10px;background:#2a2a2a"></div><div class="a" style="left:1035.5px;top:942px;width:1px;height:10px;background:#2a2a2a"></div><div class="a" style="left:1043.5px;top:942px;width:1px;height:10px;background:#2a2a2a"></div><div class="a" style="left:1051.5px;top:942px;width:1px;height:10px;background:#2a2a2a"></div><div class="a" style="left:1059.5px;top:942px;width:1px;height:10px;background:#2a2a2a"></div><div class="a" style="left:1067.5px;top:942px;width:1px;height:10px;background:#2a2a2a"></div><div class="a" style="left:1075.5px;top:942px;width:1px;height:10px;background:#2a2a2a"></div><div class="a" style="left:1083.5px;top:942px;width:1px;height:10px;background:#2a2a2a"></div><div class="a" style="left:1091.5px;top:942px;width:1px;height:10px;background:#2a2a2a"></div><div class="a" style="left:1099.5px;top:942px;width:1px;height:10px;background:#2a2a2a"></div><div class="a" style="left:1107.5px;top:942px;width:1px;height:10px;background:#2a2a2a"></div><div class="a" style="left:1115.5px;top:942px;width:1px;height:10px;background:#2a2a2a"></div><div class="a" style="left:1123.5px;top:942px;width:1px;height:10px;background:#2a2a2a"></div><div class="a" style="left:1131.5px;top:942px;width:1px;height:10px;background:#2a2a2a"></div><div class="a" style="left:1139.5px;top:942px;width:1px;height:10px;background:#2a2a2a"></div><div class="a" style="left:1147.5px;top:942px;width:1px;height:10px;background:#2a2a2a"></div><div class="a" style="left:1155.5px;top:942px;width:1px;height:10px;background:#2a2a2a"></div><div class="a" style="left:1163.5px;top:942px;width:1px;height:10px;background:#2a2a2a"></div><div class="a" style="left:1171.5px;top:942px;width:1px;height:10px;background:#2a2a2a"></div><div class="a" style="left:1179.5px;top:942px;width:1px;height:10px;background:#2a2a2a"></div><div class="a" style="left:1187.5px;top:942px;width:1px;height:10px;background:#2a2a2a"></div><div class="a" style="left:1195.5px;top:942px;width:1px;height:10px;background:#2a2a2a"></div><div class="a" style="left:1203.5px;top:942px;width:1px;height:10px;background:#2a2a2a"></div><div class="a" style="left:1211.5px;top:942px;width:1px;height:10px;background:#2a2a2a"></div><div class="a" style="left:1219.5px;top:942px;width:1px;height:10px;background:#2a2a2a"></div><div class="a" style="left:1227.5px;top:942px;width:1px;height:10px;background:#2a2a2a"></div><div class="a" style="left:1235.5px;top:942px;width:1px;height:10px;background:#2a2a2a"></div><div class="a" style="left:1243.5px;top:942px;width:1px;height:10px;background:#2a2a2a"></div><div class="a" style="left:1251.5px;top:942px;width:1px;height:10px;background:#2a2a2a"></div><div class="a" style="left:1259.5px;top:942px;width:1px;height:10px;background:#2a2a2a"></div><div class="a" style="left:1267.5px;top:942px;width:1px;height:10px;background:#2a2a2a"></div><div class="a" style="left:1275.5px;top:942px;width:1px;height:10px;background:#2a2a2a"></div><div class="a" style="left:1283.5px;top:942px;width:1px;height:10px;background:#2a2a2a"></div><div class="a" style="left:1291.5px;top:942px;width:1px;height:10px;background:#2a2a2a"></div><div class="a" style="left:1299.5px;top:942px;width:1px;height:10px;background:#2a2a2a"></div><div class="a" style="left:1307.5px;top:942px;width:1px;height:10px;background:#2a2a2a"></div><div class="a" style="left:1315.5px;top:942px;width:1px;height:10px;background:#2a2a2a"></div><div class="a" style="left:1323.5px;top:942px;width:1px;height:10px;background:#2a2a2a"></div><div class="a" style="left:1331.5px;top:942px;width:1px;height:10px;background:#2a2a2a"></div><div class="a" style="left:1339.5px;top:942px;width:1px;height:10px;background:#2a2a2a"></div><div class="a" style="left:1347.5px;top:942px;width:1px;height:10px;background:#2a2a2a"></div><div class="a" style="left:1355.5px;top:942px;width:1px;height:10px;background:#2a2a2a"></div><div class="a" style="left:1363.5px;top:942px;width:1px;height:10px;background:#2a2a2a"></div><div class="a" style="left:1371.5px;top:942px;width:1px;height:10px;background:#2a2a2a"></div><div class="a" style="left:1379.5px;top:942px;width:1px;height:10px;background:#2a2a2a"></div><div class="a" style="left:1387.5px;top:942px;width:1px;height:10px;background:#2a2a2a"></div><div class="a" style="left:1395.5px;top:942px;width:1px;height:10px;background:#2a2a2a"></div><div class="a" style="left:1403.5px;top:942px;width:1px;height:10px;background:#2a2a2a"></div><div class="a" style="left:1411.5px;top:942px;width:1px;height:10px;background:#2a2a2a"></div><div class="a" style="left:1419.5px;top:942px;width:1px;height:10px;background:#2a2a2a"></div><div class="a" style="left:1427.5px;top:942px;width:1px;height:10px;background:#2a2a2a"></div><div class="a" style="left:1435.5px;top:942px;width:1px;height:10px;background:#2a2a2a"></div><div class="a" style="left:1443.5px;top:942px;width:1px;height:10px;background:#2a2a2a"></div><div class="a" style="left:1451.5px;top:942px;width:1px;height:10px;background:#2a2a2a"></div><div class="a" style="left:1459.5px;top:942px;width:1px;height:10px;background:#2a2a2a"></div><div class="a" style="left:1467.5px;top:942px;width:1px;height:10px;background:#2a2a2a"></div><div class="a" style="left:1475.5px;top:942px;width:1px;height:10px;background:#2a2a2a"></div><div class="a" style="left:1483.5px;top:942px;width:1px;height:10px;background:#2a2a2a"></div><div class="a" style="left:1491.5px;top:942px;width:1px;height:10px;background:#2a2a2a"></div><div class="a" style="left:1499.5px;top:942px;width:1px;height:10px;background:#2a2a2a"></div><div class="a" style="left:1507.5px;top:942px;width:1px;height:10px;background:#2a2a2a"></div><div class="a" style="left:1515.5px;top:942px;width:1px;height:10px;background:#2a2a2a"></div><div class="a" style="left:1523.5px;top:942px;width:1px;height:10px;background:#2a2a2a"></div><div class="a" style="left:1531.5px;top:942px;width:1px;height:10px;background:#2a2a2a"></div><div class="a" style="left:1539.5px;top:942px;width:1px;height:10px;background:#2a2a2a"></div><div class="a" style="left:1547.5px;top:942px;width:1px;height:10px;background:#2a2a2a"></div><div class="a" style="left:1555.5px;top:942px;width:1px;height:10px;background:#2a2a2a"></div><div class="a" style="left:1563.5px;top:942px;width:1px;height:10px;background:#2a2a2a"></div><div class="a" style="left:1571.5px;top:942px;width:1px;height:10px;background:#2a2a2a"></div><div class="a" style="left:1579.5px;top:942px;width:1px;height:10px;background:#2a2a2a"></div><div class="a" style="left:1587.5px;top:942px;width:1px;height:10px;background:#2a2a2a"></div><div class="a" style="left:1595.5px;top:942px;width:1px;height:10px;background:#2a2a2a"></div>
<div class="a" style="left:325px;top:940px;width:1279px;height:1px;background:#282828;"></div>
<div class="a" style="left:325px;top:967px;width:1279px;height:1px;background:#262626;"></div>
<div class="a" style="left:627.5px;top:968px;width:8.0px;height:49px;background:#2f2f2f;border-left:1px solid #262626"></div><div class="a" style="left:635.5px;top:968px;width:8.0px;height:49px;background:#3c3c3c;border-left:1px solid #262626"></div><div class="a" style="left:643.5px;top:968px;width:8.0px;height:49px;background:#2f2f2f;border-left:1px solid #262626"></div><div class="a" style="left:651.5px;top:968px;width:8.0px;height:49px;background:#2f2f2f;border-left:1px solid #262626"></div><div class="a" style="left:659.5px;top:968px;width:8.0px;height:49px;background:#2f2f2f;border-left:1px solid #262626"></div><div class="a" style="left:667.5px;top:968px;width:8.0px;height:49px;background:#2f2f2f;border-left:1px solid #262626"></div><div class="a" style="left:675.5px;top:968px;width:8.0px;height:49px;background:#3c3c3c;border-left:1px solid #262626"></div><div class="a" style="left:683.5px;top:968px;width:8.0px;height:49px;background:#2f2f2f;border-left:1px solid #262626"></div><div class="a" style="left:691.5px;top:968px;width:8.0px;height:49px;background:#2f2f2f;border-left:1px solid #262626"></div><div class="a" style="left:699.5px;top:968px;width:8.0px;height:49px;background:#2f2f2f;border-left:1px solid #262626"></div><div class="a" style="left:707.5px;top:968px;width:8.0px;height:49px;background:#2f2f2f;border-left:1px solid #262626"></div><div class="a" style="left:715.5px;top:968px;width:8.0px;height:49px;background:#3c3c3c;border-left:1px solid #262626"></div><div class="a" style="left:723.5px;top:968px;width:8.0px;height:49px;background:#2f2f2f;border-left:1px solid #262626"></div><div class="a" style="left:731.5px;top:968px;width:8.0px;height:49px;background:#2f2f2f;border-left:1px solid #262626"></div><div class="a" style="left:739.5px;top:968px;width:8.0px;height:49px;background:#2f2f2f;border-left:1px solid #262626"></div><div class="a" style="left:747.5px;top:968px;width:8.0px;height:49px;background:#2f2f2f;border-left:1px solid #262626"></div><div class="a" style="left:755.5px;top:968px;width:8.0px;height:49px;background:#3c3c3c;border-left:1px solid #262626"></div><div class="a" style="left:763.5px;top:968px;width:8.0px;height:49px;background:#2f2f2f;border-left:1px solid #262626"></div><div class="a" style="left:771.5px;top:968px;width:8.0px;height:49px;background:#2f2f2f;border-left:1px solid #262626"></div><div class="a" style="left:779.5px;top:968px;width:8.0px;height:49px;background:#2f2f2f;border-left:1px solid #262626"></div><div class="a" style="left:787.5px;top:968px;width:8.0px;height:49px;background:#2f2f2f;border-left:1px solid #262626"></div><div class="a" style="left:795.5px;top:968px;width:8.0px;height:49px;background:#3c3c3c;border-left:1px solid #262626"></div><div class="a" style="left:803.5px;top:968px;width:8.0px;height:49px;background:#2f2f2f;border-left:1px solid #262626"></div><div class="a" style="left:811.5px;top:968px;width:8.0px;height:49px;background:#2f2f2f;border-left:1px solid #262626"></div><div class="a" style="left:819.5px;top:968px;width:8.0px;height:49px;background:#2f2f2f;border-left:1px solid #262626"></div><div class="a" style="left:827.5px;top:968px;width:8.0px;height:49px;background:#2f2f2f;border-left:1px solid #262626"></div><div class="a" style="left:835.5px;top:968px;width:8.0px;height:49px;background:#3c3c3c;border-left:1px solid #262626"></div><div class="a" style="left:843.5px;top:968px;width:8.0px;height:49px;background:#2f2f2f;border-left:1px solid #262626"></div><div class="a" style="left:851.5px;top:968px;width:8.0px;height:49px;background:#2f2f2f;border-left:1px solid #262626"></div><div class="a" style="left:859.5px;top:968px;width:8.0px;height:49px;background:#2f2f2f;border-left:1px solid #262626"></div><div class="a" style="left:867.5px;top:968px;width:8.0px;height:49px;background:#2f2f2f;border-left:1px solid #262626"></div><div class="a" style="left:875.5px;top:968px;width:8.0px;height:49px;background:#3c3c3c;border-left:1px solid #262626"></div><div class="a" style="left:883.5px;top:968px;width:8.0px;height:49px;background:#2f2f2f;border-left:1px solid #262626"></div><div class="a" style="left:891.5px;top:968px;width:8.0px;height:49px;background:#2f2f2f;border-left:1px solid #262626"></div><div class="a" style="left:899.5px;top:968px;width:8.0px;height:49px;background:#2f2f2f;border-left:1px solid #262626"></div><div class="a" style="left:907.5px;top:968px;width:8.0px;height:49px;background:#2f2f2f;border-left:1px solid #262626"></div><div class="a" style="left:915.5px;top:968px;width:8.0px;height:49px;background:#3c3c3c;border-left:1px solid #262626"></div><div class="a" style="left:923.5px;top:968px;width:8.0px;height:49px;background:#2f2f2f;border-left:1px solid #262626"></div><div class="a" style="left:931.5px;top:968px;width:8.0px;height:49px;background:#2f2f2f;border-left:1px solid #262626"></div><div class="a" style="left:939.5px;top:968px;width:8.0px;height:49px;background:#2f2f2f;border-left:1px solid #262626"></div><div class="a" style="left:947.5px;top:968px;width:8.0px;height:49px;background:#2f2f2f;border-left:1px solid #262626"></div><div class="a" style="left:955.5px;top:968px;width:8.0px;height:49px;background:#3c3c3c;border-left:1px solid #262626"></div><div class="a" style="left:963.5px;top:968px;width:8.0px;height:49px;background:#2f2f2f;border-left:1px solid #262626"></div><div class="a" style="left:971.5px;top:968px;width:8.0px;height:49px;background:#2f2f2f;border-left:1px solid #262626"></div><div class="a" style="left:979.5px;top:968px;width:8.0px;height:49px;background:#2f2f2f;border-left:1px solid #262626"></div><div class="a" style="left:987.5px;top:968px;width:8.0px;height:49px;background:#2f2f2f;border-left:1px solid #262626"></div><div class="a" style="left:995.5px;top:968px;width:8.0px;height:49px;background:#3c3c3c;border-left:1px solid #262626"></div><div class="a" style="left:1003.5px;top:968px;width:8.0px;height:49px;background:#2f2f2f;border-left:1px solid #262626"></div><div class="a" style="left:1011.5px;top:968px;width:8.0px;height:49px;background:#2f2f2f;border-left:1px solid #262626"></div><div class="a" style="left:1019.5px;top:968px;width:8.0px;height:49px;background:#2f2f2f;border-left:1px solid #262626"></div><div class="a" style="left:1027.5px;top:968px;width:8.0px;height:49px;background:#2f2f2f;border-left:1px solid #262626"></div><div class="a" style="left:1035.5px;top:968px;width:8.0px;height:49px;background:#3c3c3c;border-left:1px solid #262626"></div><div class="a" style="left:1043.5px;top:968px;width:8.0px;height:49px;background:#2f2f2f;border-left:1px solid #262626"></div><div class="a" style="left:1051.5px;top:968px;width:8.0px;height:49px;background:#2f2f2f;border-left:1px solid #262626"></div><div class="a" style="left:1059.5px;top:968px;width:8.0px;height:49px;background:#2f2f2f;border-left:1px solid #262626"></div><div class="a" style="left:1067.5px;top:968px;width:8.0px;height:49px;background:#2f2f2f;border-left:1px solid #262626"></div><div class="a" style="left:1075.5px;top:968px;width:8.0px;height:49px;background:#3c3c3c;border-left:1px solid #262626"></div><div class="a" style="left:1083.5px;top:968px;width:8.0px;height:49px;background:#2f2f2f;border-left:1px solid #262626"></div><div class="a" style="left:1091.5px;top:968px;width:8.0px;height:49px;background:#2f2f2f;border-left:1px solid #262626"></div><div class="a" style="left:1099.5px;top:968px;width:8.0px;height:49px;background:#2f2f2f;border-left:1px solid #262626"></div><div class="a" style="left:1107.5px;top:968px;width:8.0px;height:49px;background:#2f2f2f;border-left:1px solid #262626"></div><div class="a" style="left:1115.5px;top:968px;width:8.0px;height:49px;background:#3c3c3c;border-left:1px solid #262626"></div><div class="a" style="left:1123.5px;top:968px;width:8.0px;height:49px;background:#2f2f2f;border-left:1px solid #262626"></div><div class="a" style="left:1131.5px;top:968px;width:8.0px;height:49px;background:#2f2f2f;border-left:1px solid #262626"></div><div class="a" style="left:1139.5px;top:968px;width:8.0px;height:49px;background:#2f2f2f;border-left:1px solid #262626"></div><div class="a" style="left:1147.5px;top:968px;width:8.0px;height:49px;background:#2f2f2f;border-left:1px solid #262626"></div><div class="a" style="left:1155.5px;top:968px;width:8.0px;height:49px;background:#3c3c3c;border-left:1px solid #262626"></div><div class="a" style="left:1163.5px;top:968px;width:8.0px;height:49px;background:#2f2f2f;border-left:1px solid #262626"></div><div class="a" style="left:1171.5px;top:968px;width:8.0px;height:49px;background:#2f2f2f;border-left:1px solid #262626"></div><div class="a" style="left:1179.5px;top:968px;width:8.0px;height:49px;background:#2f2f2f;border-left:1px solid #262626"></div><div class="a" style="left:1187.5px;top:968px;width:8.0px;height:49px;background:#2f2f2f;border-left:1px solid #262626"></div><div class="a" style="left:1195.5px;top:968px;width:8.0px;height:49px;background:#3c3c3c;border-left:1px solid #262626"></div><div class="a" style="left:1203.5px;top:968px;width:8.0px;height:49px;background:#2f2f2f;border-left:1px solid #262626"></div><div class="a" style="left:1211.5px;top:968px;width:8.0px;height:49px;background:#2f2f2f;border-left:1px solid #262626"></div><div class="a" style="left:1219.5px;top:968px;width:8.0px;height:49px;background:#2f2f2f;border-left:1px solid #262626"></div><div class="a" style="left:1227.5px;top:968px;width:8.0px;height:49px;background:#2f2f2f;border-left:1px solid #262626"></div><div class="a" style="left:1235.5px;top:968px;width:8.0px;height:49px;background:#3c3c3c;border-left:1px solid #262626"></div><div class="a" style="left:1243.5px;top:968px;width:8.0px;height:49px;background:#2f2f2f;border-left:1px solid #262626"></div><div class="a" style="left:1251.5px;top:968px;width:8.0px;height:49px;background:#2f2f2f;border-left:1px solid #262626"></div><div class="a" style="left:1259.5px;top:968px;width:8.0px;height:49px;background:#2f2f2f;border-left:1px solid #262626"></div><div class="a" style="left:1267.5px;top:968px;width:8.0px;height:49px;background:#2f2f2f;border-left:1px solid #262626"></div><div class="a" style="left:1275.5px;top:968px;width:8.0px;height:49px;background:#3c3c3c;border-left:1px solid #262626"></div><div class="a" style="left:1283.5px;top:968px;width:8.0px;height:49px;background:#2f2f2f;border-left:1px solid #262626"></div><div class="a" style="left:1291.5px;top:968px;width:8.0px;height:49px;background:#2f2f2f;border-left:1px solid #262626"></div><div class="a" style="left:1299.5px;top:968px;width:8.0px;height:49px;background:#2f2f2f;border-left:1px solid #262626"></div><div class="a" style="left:1307.5px;top:968px;width:8.0px;height:49px;background:#2f2f2f;border-left:1px solid #262626"></div><div class="a" style="left:1315.5px;top:968px;width:8.0px;height:49px;background:#3c3c3c;border-left:1px solid #262626"></div><div class="a" style="left:1323.5px;top:968px;width:8.0px;height:49px;background:#2f2f2f;border-left:1px solid #262626"></div><div class="a" style="left:1331.5px;top:968px;width:8.0px;height:49px;background:#2f2f2f;border-left:1px solid #262626"></div><div class="a" style="left:1339.5px;top:968px;width:8.0px;height:49px;background:#2f2f2f;border-left:1px solid #262626"></div><div class="a" style="left:1347.5px;top:968px;width:8.0px;height:49px;background:#2f2f2f;border-left:1px solid #262626"></div><div class="a" style="left:1355.5px;top:968px;width:8.0px;height:49px;background:#3c3c3c;border-left:1px solid #262626"></div><div class="a" style="left:1363.5px;top:968px;width:8.0px;height:49px;background:#2f2f2f;border-left:1px solid #262626"></div><div class="a" style="left:1371.5px;top:968px;width:8.0px;height:49px;background:#2f2f2f;border-left:1px solid #262626"></div><div class="a" style="left:1379.5px;top:968px;width:8.0px;height:49px;background:#2f2f2f;border-left:1px solid #262626"></div><div class="a" style="left:1387.5px;top:968px;width:8.0px;height:49px;background:#2f2f2f;border-left:1px solid #262626"></div><div class="a" style="left:1395.5px;top:968px;width:8.0px;height:49px;background:#3c3c3c;border-left:1px solid #262626"></div><div class="a" style="left:1403.5px;top:968px;width:8.0px;height:49px;background:#2f2f2f;border-left:1px solid #262626"></div><div class="a" style="left:1411.5px;top:968px;width:8.0px;height:49px;background:#2f2f2f;border-left:1px solid #262626"></div><div class="a" style="left:1419.5px;top:968px;width:8.0px;height:49px;background:#2f2f2f;border-left:1px solid #262626"></div><div class="a" style="left:1427.5px;top:968px;width:8.0px;height:49px;background:#2f2f2f;border-left:1px solid #262626"></div><div class="a" style="left:1435.5px;top:968px;width:8.0px;height:49px;background:#3c3c3c;border-left:1px solid #262626"></div><div class="a" style="left:1443.5px;top:968px;width:8.0px;height:49px;background:#2f2f2f;border-left:1px solid #262626"></div><div class="a" style="left:1451.5px;top:968px;width:8.0px;height:49px;background:#2f2f2f;border-left:1px solid #262626"></div><div class="a" style="left:1459.5px;top:968px;width:8.0px;height:49px;background:#2f2f2f;border-left:1px solid #262626"></div><div class="a" style="left:1467.5px;top:968px;width:8.0px;height:49px;background:#2f2f2f;border-left:1px solid #262626"></div><div class="a" style="left:1475.5px;top:968px;width:8.0px;height:49px;background:#3c3c3c;border-left:1px solid #262626"></div><div class="a" style="left:1483.5px;top:968px;width:8.0px;height:49px;background:#2f2f2f;border-left:1px solid #262626"></div><div class="a" style="left:1491.5px;top:968px;width:8.0px;height:49px;background:#2f2f2f;border-left:1px solid #262626"></div><div class="a" style="left:1499.5px;top:968px;width:8.0px;height:49px;background:#2f2f2f;border-left:1px solid #262626"></div><div class="a" style="left:1507.5px;top:968px;width:8.0px;height:49px;background:#2f2f2f;border-left:1px solid #262626"></div><div class="a" style="left:1515.5px;top:968px;width:8.0px;height:49px;background:#3c3c3c;border-left:1px solid #262626"></div><div class="a" style="left:1523.5px;top:968px;width:8.0px;height:49px;background:#2f2f2f;border-left:1px solid #262626"></div><div class="a" style="left:1531.5px;top:968px;width:8.0px;height:49px;background:#2f2f2f;border-left:1px solid #262626"></div><div class="a" style="left:1539.5px;top:968px;width:8.0px;height:49px;background:#2f2f2f;border-left:1px solid #262626"></div><div class="a" style="left:1547.5px;top:968px;width:8.0px;height:49px;background:#2f2f2f;border-left:1px solid #262626"></div><div class="a" style="left:1555.5px;top:968px;width:8.0px;height:49px;background:#3c3c3c;border-left:1px solid #262626"></div><div class="a" style="left:1563.5px;top:968px;width:8.0px;height:49px;background:#2f2f2f;border-left:1px solid #262626"></div><div class="a" style="left:1571.5px;top:968px;width:8.0px;height:49px;background:#2f2f2f;border-left:1px solid #262626"></div><div class="a" style="left:1579.5px;top:968px;width:8.0px;height:49px;background:#2f2f2f;border-left:1px solid #262626"></div><div class="a" style="left:1587.5px;top:968px;width:8.0px;height:49px;background:#2f2f2f;border-left:1px solid #262626"></div><div class="a" style="left:1595.5px;top:968px;width:8.0px;height:49px;background:#3c3c3c;border-left:1px solid #262626"></div>
<div class="a" style="left:625px;top:992px;width:979px;height:1px;background:#262626;"></div>
<div class="a" style="left:625px;top:1017px;width:979px;height:1px;background:#262626;"></div>
<div class="a" style="left:325px;top:968px;width:303px;height:24px;background:#9d9d9d;"></div>
<div class="a" style="left:331px;top:969px;width:294px;height:1px;background-image:repeating-linear-gradient(90deg,#333 0 1px,transparent 1px 8px);"></div>
<div class="a" style="left:325px;top:993px;width:303px;height:24px;background:#9d9d9d;"></div>
<div class="a" style="left:331px;top:994px;width:294px;height:1px;background-image:repeating-linear-gradient(90deg,#333 0 1px,transparent 1px 8px);"></div>
<div class="a" style="left:325px;top:992px;width:303px;height:1px;background:#262626;"></div>
<div class="a" style="left:325px;top:1017px;width:303px;height:1px;background:#262626;"></div>
<svg style="left:325px;top:981px" width="7" height="7" viewBox="0 0 7 7"><circle cx="3.5" cy="3.5" r="2.8" fill="#111"/></svg>
<svg style="left:325px;top:1006px" width="7" height="7" viewBox="0 0 7 7"><circle cx="3.5" cy="3.5" r="2.8" fill="#111"/></svg>
<div class="a" style="left:624px;top:980px;width:2px;height:7.5px;background:#111;"></div>
<div class="a" style="left:624px;top:1005px;width:2px;height:7.5px;background:#111;"></div>
<div class="a" style="left:321px;top:968px;width:3px;height:24px;background:#386396;"></div>
<div class="a" style="left:626px;top:927px;width:2.5px;height:14px;background:#3d9cf0;"></div>
<svg style="left:617px;top:929px" width="9" height="10" viewBox="0 0 9 10"><path d="M0 1 L9 5 L0 9 Z" fill="#3d9cf0"/></svg>
<svg style="left:324px;top:927px" width="10" height="41" viewBox="0 0 10 41"><path d="M1 0 H8.5 V34 L4.75 40 L1 34 Z" fill="#3d8ee6"/><path d="M5 3 L9 7 L5 11 Z" fill="#5fb0ff"/></svg>
<div class="a" style="left:328px;top:960px;width:1.5px;height:80px;background:#3d8ee6;"></div>
<div class="a" style="left:326px;top:1047px;width:291px;height:6px;background:#5c5c5c;border-radius:3px"></div>
<div class="a" style="left:1623px;top:47px;width:297px;height:12px;background:#303030;"></div>
<div class="a" style="left:1623px;top:59px;width:297px;height:1px;background:#262626;"></div>
<svg style="left:1913px;top:50px" width="8" height="6" viewBox="0 0 8 6"><path d="M1 0.5 L4 3 L1 5.5 M5 0.5 L8 3 L5 5.5" fill="none" stroke="#d0d0d0" stroke-width="1.2"/></svg>
<div class="a" style="left:1623px;top:60px;width:297px;height:17px;background:#2c2c2c;"></div>
<div class="a" style="left:1668px;top:60px;width:63px;height:17px;background:#323232;"></div>
<div class="a" style="left:1623px;top:76px;width:45px;height:1px;background:#262626;"></div>
<div class="a" style="left:1731px;top:76px;width:189px;height:1px;background:#262626;"></div>
<div class="a" style="left:1667px;top:60px;width:1px;height:17px;background:#262626;"></div>
<div class="a" style="left:1731px;top:60px;width:1px;height:17px;background:#262626;"></div>
<div class="a" style="left:1772px;top:60px;width:1px;height:17px;background:#262626;"></div>
<div class="a" style="left:1813px;top:60px;width:1px;height:17px;background:#262626;"></div>
<div class="a" style="left:1862px;top:60px;width:1px;height:17px;background:#262626;"></div>
<svg style="left:1911px;top:64px" width="10" height="8" viewBox="0 0 10 8"><path d="M0 0.5 H10 M0 2.5 H10 M0 4.5 H10 M0 6.5 H10" stroke="#c8c8c8" stroke-width="1"/></svg>
<div class="a" style="left:1848px;top:88px;width:72px;height:32px;background:#4a4a4a;border-radius:5px 0 0 5px"></div>
<div class="a" style="left:1623px;top:126px;width:297px;height:2px;background:#262626;"></div>
<div class="a" style="left:1651px;top:144px;width:16px;height:15px;border:1.3px solid #c8c8c8"></div>
<div class="a" style="left:1623px;top:205px;width:297px;height:2px;background:#262626;"></div>
<div class="a" style="left:1643px;top:215px;width:36px;height:32px;background:#5a5a5a;border-radius:4px"></div>
<div class="a" style="left:1691px;top:215px;width:32px;height:32px;background:#555555;border-radius:4px"></div>
<div class="a" style="left:1735px;top:215px;width:32px;height:32px;background:#262626;border:1px solid #3c3c3c;border-radius:4px"></div>
<div class="a" style="left:1779px;top:215px;width:32px;height:32px;background:#262626;border:1px solid #3c3c3c;border-radius:4px"></div>
<svg style="left:1654px;top:223px" width="14" height="14" viewBox="0 0 14 14"><defs><linearGradient id="mg" x1="0" x2="0" y1="0" y2="1"><stop offset="0.55" stop-color="#f0f0f0"/><stop offset="1" stop-color="#8a8a8a"/></linearGradient></defs><path d="M0.5 13.5 V7 C0.5 -1.5 13.5 -1.5 13.5 7 V13.5 H10 V7 C10 3 4 3 4 7 V13.5 Z" fill="url(#mg)"/></svg>
<svg style="left:1699px;top:222px" width="17" height="17" viewBox="0 0 17 17"><path d="M3 0 V17 M0 3 H16" stroke="#f0f0f0" stroke-width="1.2"/><path d="M6 1 L3 3 L6 5" fill="none" stroke="#f0f0f0" stroke-width="1.1"/><path d="M8 8 H12 C15 8 15 13.5 12 13.5 H8" fill="none" stroke="#f0f0f0" stroke-width="2"/></svg>
<svg style="left:1743px;top:223px" width="16" height="16" viewBox="0 0 16 16"><path d="M2 15.5 V2 H15.5" fill="none" stroke="#c8c8c8" stroke-width="3.2"/><g fill="#262626"><rect x="1.3" y="5" width="1.4" height="1"/><rect x="1.3" y="8" width="1.4" height="1"/><rect x="1.3" y="11" width="1.4" height="1"/><rect x="6" y="1.3" width="1" height="1.4"/><rect x="9" y="1.3" width="1" height="1.4"/><rect x="12" y="1.3" width="1" height="1.4"/></g></svg>
<svg style="left:1788px;top:224px" width="13" height="15" viewBox="0 0 13 15"><rect x="0.5" y="6.5" width="12" height="8.5" rx="1" fill="#c8c8c8"/><path d="M3 7 V4.5 C3 0.5 10 0.5 10 4.5 V7" fill="none" stroke="#c8c8c8" stroke-width="2"/><rect x="5.8" y="9" width="1.6" height="3.5" fill="#262626"/></svg>
<div class="a" style="left:1623px;top:255px;width:297px;height:2px;background:#262626;"></div>
<svg style="left:1642px;top:273px" width="11" height="8" viewBox="0 0 11 8"><path d="M1 1.5 L5.5 6 L10 1.5" fill="none" stroke="#c8c8c8" stroke-width="2"/></svg>
<div class="a" style="left:1687px;top:305px;width:220px;height:32px;background:#2a2a2a;border:1px solid #4a4a4a;border-radius:4px"></div>
<svg style="left:1884px;top:318px" width="11" height="8" viewBox="0 0 11 8"><path d="M1 1.5 L5.5 6 L10 1.5" fill="none" stroke="#c8c8c8" stroke-width="2"/></svg>
<div class="a" style="left:1643px;top:353px;width:264px;height:32px;background:#2a2a2a;border:1px solid #4a4a4a;border-radius:4px"></div>
<div class="a" style="left:1623px;top:400px;width:297px;height:2px;background:#262626;"></div>
<svg style="left:1642px;top:419px" width="11" height="8" viewBox="0 0 11 8"><path d="M1 1.5 L5.5 6 L10 1.5" fill="none" stroke="#c8c8c8" stroke-width="2"/></svg>
<div class="a" style="left:1666px;top:482px;width:44px;height:1px;background:#4a4a4a;"></div>
<div class="a" style="left:1664px;top:530px;width:43px;height:1px;background:#4a4a4a;"></div>
<svg style="left:1710px;top:467px" width="19" height="48" viewBox="0 0 19 48"><path d="M1 1.5 H12 V14 M12 34.5 V46.5 H1" fill="none" stroke="#7a7a7a" stroke-width="1"/><rect x="7" y="21" width="10" height="9" rx="1" fill="#7a7a7a"/><path d="M9 21 V18.5 C9 15.5 14 15.5 14 18" fill="none" stroke="#7a7a7a" stroke-width="1.4"/><rect x="11.3" y="24" width="1.4" height="3" fill="#323232"/></svg>
<div class="a" style="left:1761px;top:453px;width:146px;height:32px;background:#2a2a2a;border:1px solid #4a4a4a;border-radius:4px"></div>
<div class="a" style="left:1761px;top:510px;width:14px;height:14px;border:2px solid #8c8c8c;border-radius:2.5px"></div>
<div class="a" style="left:1761px;top:547px;width:14px;height:14px;border:2px solid #8c8c8c;border-radius:2.5px"></div>
<div class="a" style="left:1761px;top:583px;width:14px;height:14px;border:2px solid #8c8c8c;border-radius:2.5px"></div>
<div class="a" style="left:1693px;top:539px;width:48px;height:24px;background:#ffffff;border-radius:4px"></div>
<div class="a" style="left:1693px;top:602px;width:43px;height:1px;background:#4a4a4a;"></div>
<div class="a" style="left:1643px;top:619px;width:264px;height:32px;background:#2a2a2a;border:1px solid #4a4a4a;border-radius:4px"></div>
<div class="a" style="left:1623px;top:667px;width:297px;height:2px;background:#262626;"></div>
<svg style="left:1642px;top:684px" width="7" height="11" viewBox="0 0 7 11"><path d="M1.2 1 L5.5 5.5 L1.2 10" fill="none" stroke="#c8c8c8" stroke-width="1.8"/></svg>
<div class="a" style="left:1623px;top:709px;width:297px;height:2px;background:#262626;"></div>
<svg style="left:1642px;top:726px" width="7" height="11" viewBox="0 0 7 11"><path d="M1.2 1 L5.5 5.5 L1.2 10" fill="none" stroke="#c8c8c8" stroke-width="1.8"/></svg>
<div class="a" style="left:1881px;top:720px;width:26px;height:14px;background:#c8c8c8;border-radius:7px"></div>
<svg style="left:1894px;top:721px" width="12" height="12" viewBox="0 0 12 12"><circle cx="6" cy="6" r="5.3" fill="#262626"/></svg>
<div class="a" style="left:1623px;top:751px;width:297px;height:2px;background:#262626;"></div>
<div class="t" style="left:50.2px;top:22.5px;font-size:13.19px;font-weight:400;color:#e8e8e8;transform:scaleX(1.035);">Animate</div>
<div class="t" style="left:132.5px;top:21.0px;font-size:12.75px;font-weight:400;color:#dadada;transform:scaleX(0.946);">File</div>
<div class="t" style="left:165.4px;top:21.0px;font-size:12.75px;font-weight:400;color:#dadada;transform:scaleX(0.968);">Edit</div>
<div class="t" style="left:200.1px;top:21.0px;font-size:12.75px;font-weight:400;color:#dadada;transform:scaleX(0.968);">View</div>
<div class="t" style="left:239.4px;top:21.0px;font-size:12.75px;font-weight:400;color:#dadada;transform:scaleX(0.949);">Insert</div>
<div class="t" style="left:283.5px;top:21.0px;font-size:12.75px;font-weight:400;color:#dadada;transform:scaleX(1.039);">Modify</div>
<div class="t" style="left:335.4px;top:21.0px;font-size:12.75px;font-weight:400;color:#dadada;transform:scaleX(1.002);">Text</div>
<div class="t" style="left:372.2px;top:21.0px;font-size:12.75px;font-weight:400;color:#dadada;transform:scaleX(0.928);">Commands</div>
<div class="t" style="left:445.1px;top:21.0px;font-size:12.75px;font-weight:400;color:#dadada;transform:scaleX(0.979);">Control</div>
<div class="t" style="left:498.4px;top:21.0px;font-size:12.75px;font-weight:400;color:#dadada;transform:scaleX(0.959);">Debug</div>
<div class="t" style="left:547.2px;top:21.0px;font-size:12.75px;font-weight:400;color:#dadada;transform:scaleX(0.993);">Window</div>
<div class="t" style="left:605.6px;top:21.0px;font-size:12.75px;font-weight:400;color:#dadada;transform:scaleX(0.992);">Help</div>
<div class="t" style="left:73.4px;top:51.9px;font-size:11.3px;font-weight:700;color:#8a8a8a;transform:scaleX(0.912);">RECOVER_bg.fla</div>
<div class="t" style="left:193.4px;top:51.9px;font-size:11.3px;font-weight:700;color:#8a8a8a;transform:scaleX(0.885);">RECOVER_RECOVER_bg.fla</div>
<div class="t" style="left:365.9px;top:51.9px;font-size:11.3px;font-weight:700;color:#8a8a8a;transform:scaleX(0.941);">RECOVER_Untitled-1_202182984547.fla</div>
<div class="t" style="left:601.4px;top:51.9px;font-size:11.3px;font-weight:700;color:#ececec;transform:scaleX(0.980);">I love Bob and Bosip.fla*</div>
<div class="t" style="left:767.5px;top:51.9px;font-size:11.3px;font-weight:700;color:#8a8a8a;transform:scaleX(0.942);">RECOVER_Untitled-3_202183035932.fla*</div>
<div class="t" style="left:1007.4px;top:51.9px;font-size:11.3px;font-weight:700;color:#8a8a8a;transform:scaleX(0.984);">ara ara.fla*</div>
<div class="t" style="left:133.0px;top:79.6px;font-size:13.04px;font-weight:400;color:#e0e0e0;transform:scaleX(0.965);">Scene 1</div>
<div class="t" style="left:1542.5px;top:79.4px;font-size:13.33px;font-weight:400;color:#e4e4e4;transform:scaleX(0.982);">44%</div>
<div class="t" style="left:15.3px;top:63.3px;font-size:10.29px;font-weight:700;color:#e0e0e0;transform:scaleX(1.154);">T.</div>
<div class="t" style="left:71.4px;top:864.0px;font-size:10.87px;font-weight:700;color:#ececec;transform:scaleX(0.949);">Timeline</div>
<div class="t" style="left:127.7px;top:864.0px;font-size:10.87px;font-weight:700;color:#8a8a8a;transform:scaleX(0.983);">Output</div>
<div class="t" style="left:112.5px;top:975.6px;font-size:11.01px;font-weight:400;color:#f0f0f0;transform:scaleX(0.911);">Layer_2</div>
<div class="t" style="left:112.5px;top:1000.3px;font-size:11.01px;font-weight:400;color:#d8d8d8;transform:scaleX(0.911);">Layer_1</div>
<div class="t" style="left:351.0px;top:896.6px;font-size:13.77px;font-weight:400;color:#9a9a9a;transform:scaleX(1.119);">30.00</div>
<div class="t" style="left:390.7px;top:895.1px;font-size:9.57px;font-weight:400;color:#9a9a9a;transform:scaleX(0.809);">FPS</div>
<div class="t" style="left:431.0px;top:896.6px;font-size:13.77px;font-weight:700;color:#f0f0f0;transform:scaleX(1.104);">1</div>
<div class="t" style="left:443.7px;top:895.1px;font-size:9.57px;font-weight:400;color:#e0e0e0;transform:scaleX(1.052);">F</div>
<div class="t" style="left:357.2px;top:952.1px;font-size:11.3px;font-weight:400;color:#a8a8a8;">5</div>
<div class="t" style="left:397.2px;top:952.1px;font-size:11.3px;font-weight:400;color:#a8a8a8;">10</div>
<div class="t" style="left:437.2px;top:952.1px;font-size:11.3px;font-weight:400;color:#a8a8a8;">15</div>
<div class="t" style="left:477.2px;top:952.1px;font-size:11.3px;font-weight:400;color:#a8a8a8;">20</div>
<div class="t" style="left:517.2px;top:952.1px;font-size:11.3px;font-weight:400;color:#a8a8a8;">25</div>
<div class="t" style="left:557.2px;top:952.1px;font-size:11.3px;font-weight:400;color:#a8a8a8;">30</div>
<div class="t" style="left:597.2px;top:952.1px;font-size:11.3px;font-weight:400;color:#a8a8a8;">35</div>
<div class="t" style="left:637.2px;top:952.1px;font-size:11.3px;font-weight:400;color:#a8a8a8;">40</div>
<div class="t" style="left:677.2px;top:952.1px;font-size:11.3px;font-weight:400;color:#a8a8a8;">45</div>
<div class="t" style="left:717.2px;top:952.1px;font-size:11.3px;font-weight:400;color:#a8a8a8;">50</div>
<div class="t" style="left:757.2px;top:952.1px;font-size:11.3px;font-weight:400;color:#a8a8a8;">55</div>
<div class="t" style="left:797.2px;top:952.1px;font-size:11.3px;font-weight:400;color:#a8a8a8;">60</div>
<div class="t" style="left:837.2px;top:952.1px;font-size:11.3px;font-weight:400;color:#a8a8a8;">65</div>
<div class="t" style="left:877.2px;top:952.1px;font-size:11.3px;font-weight:400;color:#a8a8a8;">70</div>
<div class="t" style="left:917.2px;top:952.1px;font-size:11.3px;font-weight:400;color:#a8a8a8;">75</div>
<div class="t" style="left:957.2px;top:952.1px;font-size:11.3px;font-weight:400;color:#a8a8a8;">80</div>
<div class="t" style="left:997.2px;top:952.1px;font-size:11.3px;font-weight:400;color:#a8a8a8;">85</div>
<div class="t" style="left:1037.2px;top:952.1px;font-size:11.3px;font-weight:400;color:#a8a8a8;">90</div>
<div class="t" style="left:1077.2px;top:952.1px;font-size:11.3px;font-weight:400;color:#a8a8a8;">95</div>
<div class="t" style="left:1117.2px;top:952.1px;font-size:11.3px;font-weight:400;color:#a8a8a8;">100</div>
<div class="t" style="left:1157.2px;top:952.1px;font-size:11.3px;font-weight:400;color:#a8a8a8;">105</div>
<div class="t" style="left:1197.2px;top:952.1px;font-size:11.3px;font-weight:400;color:#a8a8a8;">110</div>
<div class="t" style="left:1237.2px;top:952.1px;font-size:11.3px;font-weight:400;color:#a8a8a8;">115</div>
<div class="t" style="left:1277.2px;top:952.1px;font-size:11.3px;font-weight:400;color:#a8a8a8;">120</div>
<div class="t" style="left:1317.2px;top:952.1px;font-size:11.3px;font-weight:400;color:#a8a8a8;">125</div>
<div class="t" style="left:1357.2px;top:952.1px;font-size:11.3px;font-weight:400;color:#a8a8a8;">130</div>
<div class="t" style="left:1397.2px;top:952.1px;font-size:11.3px;font-weight:400;color:#a8a8a8;">135</div>
<div class="t" style="left:1437.2px;top:952.1px;font-size:11.3px;font-weight:400;color:#a8a8a8;">140</div>
<div class="t" style="left:1477.2px;top:952.1px;font-size:11.3px;font-weight:400;color:#a8a8a8;">145</div>
<div class="t" style="left:1517.2px;top:952.1px;font-size:11.3px;font-weight:400;color:#a8a8a8;">150</div>
<div class="t" style="left:1557.2px;top:952.1px;font-size:11.3px;font-weight:400;color:#a8a8a8;">155</div>
<div class="t" style="left:1595.2px;top:952.1px;font-size:11.3px;font-weight:400;color:#a8a8a8;">1</div>
<div class="t" style="left:557.6px;top:929.6px;font-size:10.43px;font-weight:400;color:#9fc0e8;font-style:italic">1s</div>
<div class="t" style="left:797.2px;top:929.6px;font-size:10.43px;font-weight:400;color:#9a9a9a;font-style:italic">2s</div>
<div class="t" style="left:1037.2px;top:929.6px;font-size:10.43px;font-weight:400;color:#9a9a9a;font-style:italic">3s</div>
<div class="t" style="left:1277.2px;top:929.6px;font-size:10.43px;font-weight:400;color:#9a9a9a;font-style:italic">4s</div>
<div class="t" style="left:1517.0px;top:929.6px;font-size:10.43px;font-weight:400;color:#9a9a9a;font-style:italic">5s</div>
<div class="t" style="left:1629.3px;top:63.1px;font-size:9.86px;font-weight:700;color:#8a8a8a;transform:scaleX(0.913);">Assets</div>
<div class="t" style="left:1674.4px;top:63.1px;font-size:9.86px;font-weight:700;color:#f0f0f0;transform:scaleX(0.993);">Properties</div>
<div class="t" style="left:1737.3px;top:63.1px;font-size:9.86px;font-weight:700;color:#8a8a8a;transform:scaleX(1.019);">Color</div>
<div class="t" style="left:1779.6px;top:63.1px;font-size:9.86px;font-weight:700;color:#8a8a8a;transform:scaleX(1.052);">Align</div>
<div class="t" style="left:1820.6px;top:63.1px;font-size:9.86px;font-weight:700;color:#8a8a8a;transform:scaleX(0.994);">Library</div>
<div class="t" style="left:1651.1px;top:98.1px;font-size:13.33px;font-weight:400;color:#ececec;transform:scaleX(1.063);">Tool</div>
<div class="t" style="left:1718.8px;top:98.1px;font-size:13.33px;font-weight:400;color:#858585;transform:scaleX(0.963);">Object</div>
<div class="t" style="left:1791.9px;top:98.1px;font-size:13.33px;font-weight:400;color:#858585;transform:scaleX(0.997);">Frame</div>
<div class="t" style="left:1872.8px;top:98.7px;font-size:12.75px;font-weight:400;color:#f2f2f2;transform:scaleX(1.011);">Doc</div>
<div class="t" style="left:1652.7px;top:146.5px;font-size:10.87px;font-weight:700;color:#d0d0d0;transform:scaleX(0.849);">An</div>
<div class="t" style="left:1695.3px;top:146.6px;font-size:12.9px;font-weight:400;color:#a6a6a6;transform:scaleX(0.979);">I love Bob and Bosip.fla</div>
<div class="t" style="left:1695.6px;top:181.8px;font-size:12.61px;font-weight:400;color:#a6a6a6;transform:scaleX(1.063);">Document</div>
<div class="t" style="left:1663.3px;top:270.9px;font-size:13.91px;font-weight:700;color:#d0d0d0;transform:scaleX(0.917);">Publish Settings</div>
<div class="t" style="left:1643.5px;top:315.3px;font-size:12.61px;font-weight:400;color:#8a8a8a;transform:scaleX(0.904);">Profile</div>
<div class="t" style="left:1699.5px;top:315.3px;font-size:13.62px;font-weight:400;color:#e6e6e6;transform:scaleX(1.003);">Default</div>
<div class="t" style="left:1735.7px;top:363.0px;font-size:13.91px;font-weight:400;color:#e6e6e6;transform:scaleX(0.923);">More settings</div>
<div class="t" style="left:1663.3px;top:417.3px;font-size:13.91px;font-weight:700;color:#d0d0d0;transform:scaleX(0.920);">Document Settings</div>
<div class="t" style="left:1643.2px;top:461.8px;font-size:11.59px;font-weight:400;color:#8a8a8a;transform:scaleX(1.041);">W</div>
<div class="t" style="left:1666.7px;top:460.4px;font-size:13.33px;font-weight:400;color:#eaeaea;transform:scaleX(0.978);">1920</div>
<div class="t" style="left:1643.2px;top:509.8px;font-size:11.59px;font-weight:400;color:#8a8a8a;transform:scaleX(1.062);">H</div>
<div class="t" style="left:1663.5px;top:508.9px;font-size:12.75px;font-weight:400;color:#eaeaea;transform:scaleX(1.027);">1080</div>
<div class="t" style="left:1788.7px;top:463.6px;font-size:13.04px;font-weight:400;color:#e6e6e6;transform:scaleX(1.007);">Match contents</div>
<div class="t" style="left:1785.0px;top:510.9px;font-size:13.91px;font-weight:400;color:#e6e6e6;transform:scaleX(0.935);">Scale Content</div>
<div class="t" style="left:1643.2px;top:546.2px;font-size:11.88px;font-weight:400;color:#8a8a8a;transform:scaleX(0.935);">Stage</div>
<div class="t" style="left:1785.0px;top:546.7px;font-size:13.91px;font-weight:400;color:#e6e6e6;transform:scaleX(0.919);">Apply to pasteboard</div>
<div class="t" style="left:1643.2px;top:581.8px;font-size:11.59px;font-weight:400;color:#8a8a8a;transform:scaleX(0.878);">FPS</div>
<div class="t" style="left:1692.7px;top:580.9px;font-size:12.75px;font-weight:400;color:#eaeaea;transform:scaleX(1.052);">30</div>
<div class="t" style="left:1785.0px;top:582.9px;font-size:13.91px;font-weight:400;color:#e6e6e6;transform:scaleX(0.892);">Scale Spans</div>
<div class="t" style="left:1735.5px;top:629.6px;font-size:13.33px;font-weight:400;color:#e6e6e6;transform:scaleX(0.965);">More settings</div>
<div class="t" style="left:1663.1px;top:683.2px;font-size:13.48px;font-weight:700;color:#d0d0d0;transform:scaleX(0.938);">SWF History</div>
<div class="t" style="left:1663.0px;top:724.7px;font-size:14.13px;font-weight:700;color:#d0d0d0;transform:scaleX(0.894);">Accessibility</div>
</body></html>
